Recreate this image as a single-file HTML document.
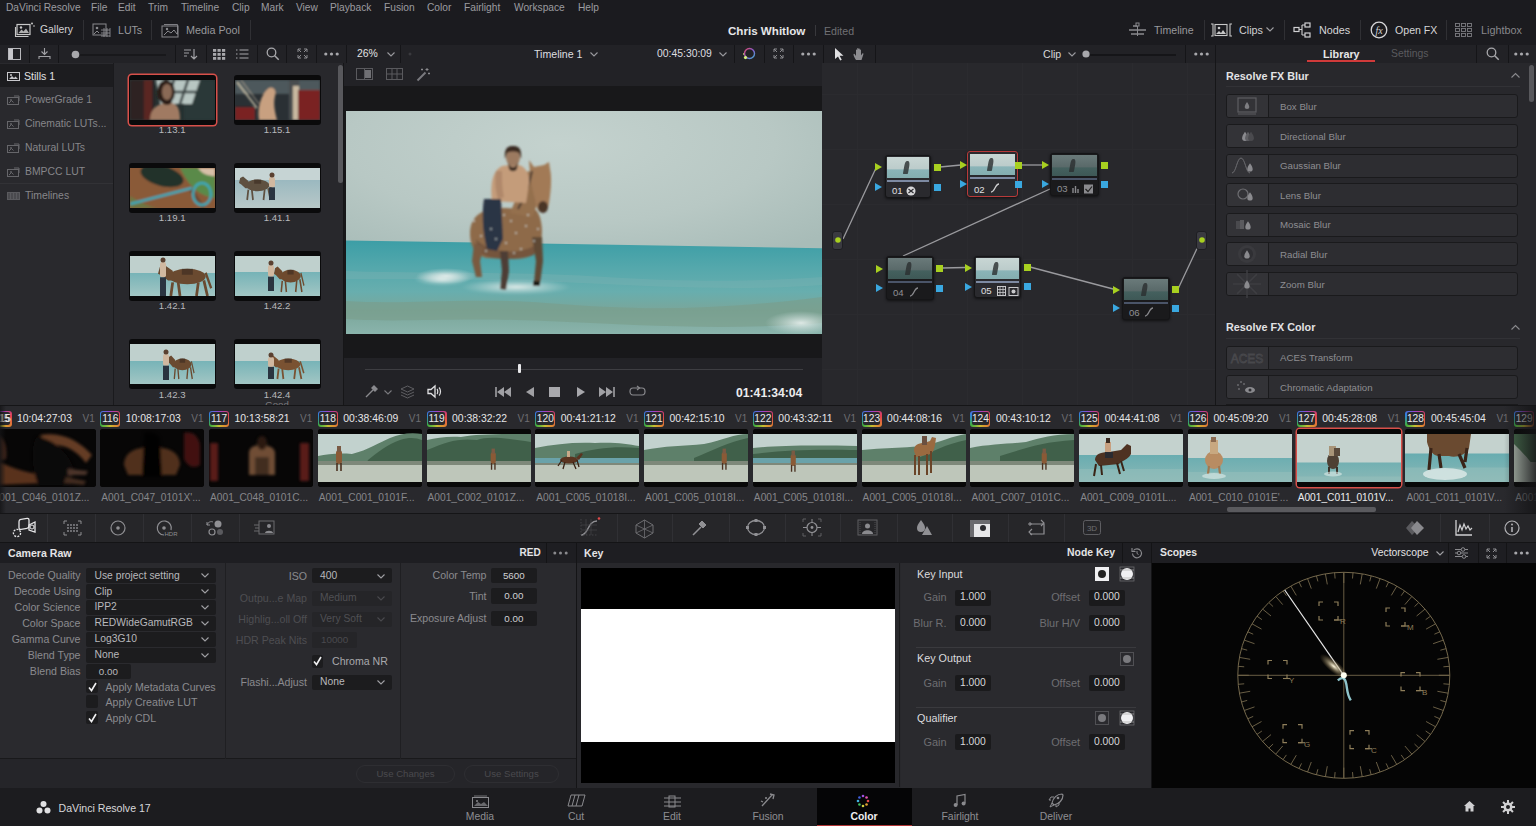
<!DOCTYPE html>
<html><head><meta charset="utf-8">
<style>
*{box-sizing:border-box;margin:0;padding:0}
html,body{width:1536px;height:826px;overflow:hidden;background:#1c1c20;font-family:"Liberation Sans",sans-serif;color:#c8c8c8;position:relative}
.a{position:absolute}
.t{position:absolute;white-space:nowrap;line-height:1}
svg{position:absolute;overflow:visible}
</style></head><body>
<div class="a" style="left:0px;top:0px;width:1536px;height:45px;background:#1b1b1f;"></div>
<div class="t" style="top:2.50px;font-size:10.2px;color:#9c9ca0;left:6px;">DaVinci Resolve</div>
<div class="t" style="top:2.50px;font-size:10.2px;color:#9c9ca0;left:91px;">File</div>
<div class="t" style="top:2.50px;font-size:10.2px;color:#9c9ca0;left:118px;">Edit</div>
<div class="t" style="top:2.50px;font-size:10.2px;color:#9c9ca0;left:148px;">Trim</div>
<div class="t" style="top:2.50px;font-size:10.2px;color:#9c9ca0;left:181px;">Timeline</div>
<div class="t" style="top:2.50px;font-size:10.2px;color:#9c9ca0;left:232px;">Clip</div>
<div class="t" style="top:2.50px;font-size:10.2px;color:#9c9ca0;left:261px;">Mark</div>
<div class="t" style="top:2.50px;font-size:10.2px;color:#9c9ca0;left:296px;">View</div>
<div class="t" style="top:2.50px;font-size:10.2px;color:#9c9ca0;left:330px;">Playback</div>
<div class="t" style="top:2.50px;font-size:10.2px;color:#9c9ca0;left:384px;">Fusion</div>
<div class="t" style="top:2.50px;font-size:10.2px;color:#9c9ca0;left:427px;">Color</div>
<div class="t" style="top:2.50px;font-size:10.2px;color:#9c9ca0;left:464px;">Fairlight</div>
<div class="t" style="top:2.50px;font-size:10.2px;color:#9c9ca0;left:514px;">Workspace</div>
<div class="t" style="top:2.50px;font-size:10.2px;color:#9c9ca0;left:578px;">Help</div>
<svg style="left:14px;top:21px" width="22" height="18" viewBox="0 0 22 18"><rect x="3" y="3.5" width="13" height="10" fill="none" stroke="#c8c8c8" stroke-width="1.2"/><path d="M1.5 6v9.5h13" fill="none" stroke="#c8c8c8" stroke-width="1.1"/><path d="M4.5 12l3-3.5 2 2 2.5-3 3 4.5z" fill="#b0b0b0"/><circle cx="7" cy="6.5" r="1.2" fill="#c8c8c8"/><circle cx="18" cy="2.5" r="1" fill="#c8c8c8"/><circle cx="20" cy="5" r="0.8" fill="#c8c8c8"/></svg>
<div class="t" style="top:24.90px;font-size:10.4px;color:#d2d2d4;left:40px;">Gallery</div>
<div class="a" style="left:83px;top:20px;width:1px;height:20px;background:#303034;"></div>
<svg style="left:92px;top:23px" width="20" height="15" viewBox="0 0 20 15"><rect x="1" y="1" width="13" height="11" fill="none" stroke="#8a8a8e" stroke-width="1"/><path d="M9 7h9M9 10h9M9 13h9M12 5v9M15 5v9M18 5v9" stroke="#8a8a8e" stroke-width="0.9"/><circle cx="5" cy="5" r="1.3" fill="#8a8a8e"/><path d="M2 11l3-3 2 2" stroke="#8a8a8e" fill="none"/></svg>
<div class="t" style="top:24.81px;font-size:10.6px;color:#98989c;left:118px;">LUTs</div>
<div class="a" style="left:151px;top:20px;width:1px;height:20px;background:#303034;"></div>
<svg style="left:161px;top:22px" width="19" height="16" viewBox="0 0 19 16"><rect x="1" y="4" width="16" height="11" fill="none" stroke="#8a8a8e" stroke-width="1"/><path d="M3 2.5h13.5v10" fill="none" stroke="#8a8a8e" stroke-width="0.9"/><path d="M3 13l4-4 3 2 3-3 3 4" stroke="#8a8a8e" fill="none"/><circle cx="6" cy="7" r="1.2" fill="#8a8a8e"/></svg>
<div class="t" style="top:24.71px;font-size:10.8px;color:#98989c;left:186px;">Media Pool</div>
<div class="a" style="left:250px;top:20px;width:1px;height:20px;background:#303034;"></div>
<div class="t" style="top:24.62px;font-size:11.6px;color:#e6e6e8;font-weight:700;left:728px;">Chris Whitlow</div>
<div class="a" style="left:815px;top:25px;width:1px;height:11px;background:#38383c;"></div>
<div class="t" style="top:25.61px;font-size:10.6px;color:#707074;left:824px;">Edited</div>
<svg style="left:1128px;top:22px" width="19" height="16" viewBox="0 0 19 16"><path d="M1 8h17M3 12h13M5 4h4" stroke="#8a8a8e" stroke-width="1.3"/><rect x="8" y="1" width="3" height="3" fill="none" stroke="#8a8a8e"/><path d="M9.5 4v10" stroke="#8a8a8e"/></svg>
<div class="t" style="top:24.81px;font-size:10.6px;color:#98989c;left:1154px;">Timeline</div>
<div class="a" style="left:1204px;top:20px;width:1px;height:20px;background:#303034;"></div>
<svg style="left:1210px;top:23px" width="23" height="14" viewBox="0 0 23 14"><path d="M1 1h2v12H1M22 1h-2v12h2" fill="none" stroke="#c8c8c8" stroke-width="1.1"/><rect x="5" y="1.5" width="12" height="11" fill="none" stroke="#c8c8c8" stroke-width="1.1"/><path d="M6 11l3-3 2 2 2-3 3 4z" fill="#c8c8c8"/><circle cx="9" cy="5" r="1.3" fill="#c8c8c8"/></svg>
<div class="t" style="top:24.71px;font-size:10.8px;color:#d0d0d2;left:1239px;">Clips</div>
<svg style="left:1266px;top:27px" width="8" height="5" viewBox="0 0 8 5"><path d="M0.5 0.5l3.5 3.5 3.5-3.5" fill="none" stroke="#a0a0a4" stroke-width="1.1"/></svg>
<div class="a" style="left:1284px;top:20px;width:1px;height:20px;background:#303034;"></div>
<svg style="left:1293px;top:22px" width="19" height="16" viewBox="0 0 19 16"><rect x="1" y="5.5" width="5" height="4" fill="none" stroke="#d0d0d2" stroke-width="1.2"/><rect x="12" y="1" width="5" height="4" fill="none" stroke="#d0d0d2" stroke-width="1.2"/><rect x="12" y="11" width="5" height="4" fill="none" stroke="#d0d0d2" stroke-width="1.2"/><path d="M6 7.5h3M9 3v10M9 3h3M9 13h3" stroke="#d0d0d2" stroke-width="1.1" fill="none"/></svg>
<div class="t" style="top:24.71px;font-size:10.8px;color:#d6d6d8;left:1319px;">Nodes</div>
<div class="a" style="left:1360px;top:20px;width:1px;height:20px;background:#303034;"></div>
<svg style="left:1370px;top:21px" width="18" height="18" viewBox="0 0 18 18"><circle cx="9" cy="9" r="7.8" fill="none" stroke="#d6d6d8" stroke-width="1.3"/><text x="9" y="12.5" font-family="Liberation Serif" font-style="italic" font-size="10" fill="#d6d6d8" text-anchor="middle">fx</text></svg>
<div class="t" style="top:24.81px;font-size:10.6px;color:#d6d6d8;left:1395px;">Open FX</div>
<div class="a" style="left:1446px;top:20px;width:1px;height:20px;background:#303034;"></div>
<svg style="left:1455px;top:23px" width="17" height="14" viewBox="0 0 17 14"><rect x="0.5" y="0.5" width="4" height="3" fill="none" stroke="#7c7c80" stroke-width="0.9"/><rect x="0.5" y="5.5" width="4" height="3" fill="none" stroke="#7c7c80" stroke-width="0.9"/><rect x="0.5" y="10.5" width="4" height="3" fill="none" stroke="#7c7c80" stroke-width="0.9"/><rect x="6.5" y="0.5" width="4" height="3" fill="none" stroke="#7c7c80" stroke-width="0.9"/><rect x="6.5" y="5.5" width="4" height="3" fill="none" stroke="#7c7c80" stroke-width="0.9"/><rect x="6.5" y="10.5" width="4" height="3" fill="none" stroke="#7c7c80" stroke-width="0.9"/><rect x="12.5" y="0.5" width="4" height="3" fill="none" stroke="#7c7c80" stroke-width="0.9"/><rect x="12.5" y="5.5" width="4" height="3" fill="none" stroke="#7c7c80" stroke-width="0.9"/><rect x="12.5" y="10.5" width="4" height="3" fill="none" stroke="#7c7c80" stroke-width="0.9"/></svg>
<div class="t" style="top:24.71px;font-size:10.8px;color:#88888c;left:1481px;">Lightbox</div>
<div class="a" style="left:0px;top:45px;width:1536px;height:18px;background:#222226;"></div>
<div class="a" style="left:29px;top:45px;width:1px;height:18px;background:#151518;"></div>
<div class="a" style="left:58px;top:45px;width:1px;height:18px;background:#151518;"></div>
<div class="a" style="left:175px;top:45px;width:1px;height:18px;background:#151518;"></div>
<div class="a" style="left:206px;top:45px;width:1px;height:18px;background:#151518;"></div>
<div class="a" style="left:257px;top:45px;width:1px;height:18px;background:#151518;"></div>
<div class="a" style="left:286px;top:45px;width:1px;height:18px;background:#151518;"></div>
<div class="a" style="left:316px;top:45px;width:1px;height:18px;background:#151518;"></div>
<div class="a" style="left:346px;top:45px;width:1px;height:18px;background:#151518;"></div>
<div class="a" style="left:400px;top:45px;width:1px;height:18px;background:#151518;"></div>
<div class="a" style="left:734px;top:45px;width:1px;height:18px;background:#151518;"></div>
<div class="a" style="left:764px;top:45px;width:1px;height:18px;background:#151518;"></div>
<div class="a" style="left:793px;top:45px;width:1px;height:18px;background:#151518;"></div>
<div class="a" style="left:823px;top:45px;width:1px;height:18px;background:#151518;"></div>
<div class="a" style="left:875px;top:45px;width:1px;height:18px;background:#151518;"></div>
<div class="a" style="left:1185px;top:45px;width:1px;height:18px;background:#151518;"></div>
<div class="a" style="left:1215px;top:45px;width:1px;height:18px;background:#151518;"></div>
<div class="a" style="left:1476px;top:45px;width:1px;height:18px;background:#151518;"></div>
<div class="a" style="left:1508px;top:45px;width:1px;height:18px;background:#151518;"></div>
<svg style="left:8px;top:48px" width="13" height="12" viewBox="0 0 13 12"><rect x="0.5" y="0.5" width="12" height="11" fill="none" stroke="#b8b8bc" stroke-width="1"/><rect x="1" y="1" width="4" height="10" fill="#c8c8cc"/></svg>
<svg style="left:38px;top:47px" width="13" height="13" viewBox="0 0 13 13"><path d="M6.5 1v6M3.5 4.5l3 3 3-3M1 12v-2.5h11V12" fill="none" stroke="#a0a0a4" stroke-width="1.1"/></svg>
<div class="a" style="left:78px;top:54px;width:88px;height:2px;background:#18181b;"></div>
<svg style="left:71px;top:50px" width="9" height="9"><circle cx="4.5" cy="4.5" r="3.8" fill="#a8a8ac"/></svg>
<svg style="left:183px;top:48px" width="15" height="13" viewBox="0 0 15 13"><path d="M1 2h7M1 5h5M1 8h3M11 1v10M8 8l3 3 3-3" fill="none" stroke="#a0a0a4" stroke-width="1.2"/></svg>
<svg style="left:213px;top:49px" width="13" height="10" viewBox="0 0 13 10"><rect x="0.0" y="0" width="3.2" height="2.8" fill="#a8a8ac"/><rect x="0.0" y="4" width="3.2" height="2.8" fill="#a8a8ac"/><rect x="0.0" y="8" width="3.2" height="2.8" fill="#a8a8ac"/><rect x="4.5" y="0" width="3.2" height="2.8" fill="#a8a8ac"/><rect x="4.5" y="4" width="3.2" height="2.8" fill="#a8a8ac"/><rect x="4.5" y="8" width="3.2" height="2.8" fill="#a8a8ac"/><rect x="9.0" y="0" width="3.2" height="2.8" fill="#a8a8ac"/><rect x="9.0" y="4" width="3.2" height="2.8" fill="#a8a8ac"/><rect x="9.0" y="8" width="3.2" height="2.8" fill="#a8a8ac"/></svg>
<svg style="left:236px;top:49px" width="13" height="10" viewBox="0 0 13 10"><path d="M0 1h1.5M0 5h1.5M0 9h1.5M3.5 1h9M3.5 5h9M3.5 9h9" stroke="#a8a8ac" stroke-width="1.2"/></svg>
<svg style="left:266px;top:47px" width="14" height="14" viewBox="0 0 14 14"><circle cx="5.5" cy="5.5" r="4.3" fill="none" stroke="#a8a8ac" stroke-width="1.3"/><path d="M8.7 8.7l4 4" stroke="#a8a8ac" stroke-width="1.5"/></svg>
<svg style="left:297px;top:48px" width="11" height="11" viewBox="0 0 11 11"><path d="M1 4V1h3M1 1l3 3M10 4V1H7M10 1L7 4M1 7v3h3M1 10l3-3M10 7v3H7M10 10L7 7" fill="none" stroke="#8c8c90" stroke-width="1"/></svg>
<svg style="left:324px;top:52px" width="15" height="4" viewBox="0 0 15 4"><circle cx="1.8" cy="2" r="1.6" fill="#a8a8ac"/><circle cx="7.5" cy="2" r="1.6" fill="#a8a8ac"/><circle cx="13.2" cy="2" r="1.6" fill="#a8a8ac"/></svg>
<div class="t" style="top:48.90px;font-size:10.4px;color:#e2e2e4;left:357px;">26%</div>
<svg style="left:387px;top:52px" width="8" height="5" viewBox="0 0 8 5"><path d="M0.5 0.5l3.5 3.5 3.5-3.5" fill="none" stroke="#9a9a9e" stroke-width="1.1"/></svg>
<svg style="left:408px;top:52px" width="4" height="4"><circle cx="2" cy="2" r="1.5" fill="#3a3a3e"/></svg>
<div class="t" style="top:48.81px;font-size:10.6px;color:#dedee0;left:534px;">Timeline 1</div>
<svg style="left:590px;top:52px" width="8" height="5" viewBox="0 0 8 5"><path d="M0.5 0.5l3.5 3.5 3.5-3.5" fill="none" stroke="#9a9a9e" stroke-width="1.1"/></svg>
<div class="t" style="top:48.90px;font-size:10.4px;color:#dedee0;left:657px;">00:45:30:09</div>
<svg style="left:719px;top:52px" width="8" height="5" viewBox="0 0 8 5"><path d="M0.5 0.5l3.5 3.5 3.5-3.5" fill="none" stroke="#9a9a9e" stroke-width="1.1"/></svg>
<svg style="left:741px;top:47px" width="15" height="15" viewBox="0 0 15 15"><circle cx="8.5" cy="6.5" r="5" fill="none" stroke="url(#cw)" stroke-width="1.4"/><defs><linearGradient id="cw" x1="0" y1="0" x2="1" y2="1"><stop offset="0" stop-color="#e04a6a"/><stop offset="0.5" stop-color="#8a5ad0"/><stop offset="1" stop-color="#40b0d0"/></linearGradient></defs><path d="M3.5 10.5l1 -2 1 2 -1 2z M2 7l0.6-1.2 0.6 1.2-0.6 1.2z" fill="#c8e070"/><circle cx="4.5" cy="10.5" r="1.6" fill="#d6f080"/></svg>
<svg style="left:773px;top:48px" width="11" height="11" viewBox="0 0 11 11"><path d="M1 4V1h3M1 1l3 3M10 4V1H7M10 1L7 4M1 7v3h3M1 10l3-3M10 7v3H7M10 10L7 7" fill="none" stroke="#8c8c90" stroke-width="1"/></svg>
<svg style="left:801px;top:52px" width="15" height="4" viewBox="0 0 15 4"><circle cx="1.8" cy="2" r="1.6" fill="#a8a8ac"/><circle cx="7.5" cy="2" r="1.6" fill="#a8a8ac"/><circle cx="13.2" cy="2" r="1.6" fill="#a8a8ac"/></svg>
<svg style="left:834px;top:47px" width="10" height="14" viewBox="0 0 10 14"><path d="M1 1v11l3-2.5 2.2 4 1.6-.8-2.2-4H9.5z" fill="#e0e0e2"/></svg>
<svg style="left:853px;top:47px" width="14" height="14" viewBox="0 0 14 14"><path d="M3 13c-1-1.5-2.5-4-2.5-5.5 0-.8 1-.9 1.5 0L3 9V3c0-.8 1.2-.8 1.2 0v4.5V1.5c0-.8 1.3-.8 1.3 0V7V2c0-.8 1.3-.8 1.3 0v5V3c0-.8 1.2-.8 1.2 0v5.5l1.2-1.8c.5-.7 1.5-.3 1.2.5L8.5 13z" fill="#8c8c90"/></svg>
<div class="t" style="top:48.81px;font-size:10.6px;color:#d8d8da;left:1043px;">Clip</div>
<svg style="left:1068px;top:52px" width="8" height="5" viewBox="0 0 8 5"><path d="M0.5 0.5l3.5 3.5 3.5-3.5" fill="none" stroke="#9a9a9e" stroke-width="1.1"/></svg>
<div class="a" style="left:1090px;top:54px;width:86px;height:1.5px;background:#151518;"></div>
<svg style="left:1082px;top:50px" width="8" height="8"><circle cx="4" cy="4" r="3.6" fill="#a8a8ac"/></svg>
<svg style="left:1194px;top:52px" width="15" height="4" viewBox="0 0 15 4"><circle cx="1.8" cy="2" r="1.6" fill="#a8a8ac"/><circle cx="7.5" cy="2" r="1.6" fill="#a8a8ac"/><circle cx="13.2" cy="2" r="1.6" fill="#a8a8ac"/></svg>
<div class="t" style="top:48.71px;font-size:10.8px;color:#e6e6e8;font-weight:700;left:1323px;">Library</div>
<div class="a" style="left:1307px;top:60px;width:68px;height:2px;background:#d03a3a;"></div>
<div class="t" style="top:48.90px;font-size:10.4px;color:#5a5a5e;left:1391px;">Settings</div>
<svg style="left:1486px;top:47px" width="14" height="14" viewBox="0 0 14 14"><circle cx="5.5" cy="5.5" r="4.3" fill="none" stroke="#a8a8ac" stroke-width="1.3"/><path d="M8.7 8.7l4 4" stroke="#a8a8ac" stroke-width="1.5"/></svg>
<svg style="left:1514px;top:52px" width="15" height="4" viewBox="0 0 15 4"><circle cx="1.8" cy="2" r="1.6" fill="#a8a8ac"/><circle cx="7.5" cy="2" r="1.6" fill="#a8a8ac"/><circle cx="13.2" cy="2" r="1.6" fill="#a8a8ac"/></svg>
<div class="a" style="left:0px;top:63px;width:113px;height:342px;background:#29292d;"></div>
<div class="a" style="left:0px;top:64px;width:113px;height:23px;background:#1c1c1f;"></div>
<div class="a" style="left:0px;top:183px;width:113px;height:1px;background:#323236;"></div>
<div class="a" style="left:113px;top:63px;width:1px;height:342px;background:#1a1a1d;"></div>
<div class="t" style="top:71.31px;font-size:10.6px;color:#e0e0e2;left:24px;">Stills 1</div>
<svg style="left:7px;top:72px" width="13" height="9" viewBox="0 0 13 9"><rect x="0.5" y="0.5" width="12" height="8" fill="none" stroke="#c8c8cc" stroke-width="1"/><path d="M2 7l3-3 2 2 1.5-1.5L11 7z" fill="#c8c8cc"/><circle cx="4" cy="3" r="1" fill="#c8c8cc"/></svg>
<div class="t" style="top:95.20px;font-size:10.4px;color:#86868a;left:25px;">PowerGrade 1</div>
<svg style="left:7px;top:95.3px" width="13" height="10" viewBox="0 0 13 10"><rect x="0.5" y="2.5" width="11" height="7" fill="none" stroke="#66666a" stroke-width="1"/><path d="M7 1h5v5" fill="none" stroke="#66666a"/><path d="M2 8l2.5-2.5 2 2" stroke="#66666a" fill="none"/><circle cx="4" cy="5" r="0.9" fill="#66666a"/></svg>
<div class="t" style="top:118.90px;font-size:10.4px;color:#86868a;left:25px;">Cinematic LUTs...</div>
<svg style="left:7px;top:119px" width="13" height="10" viewBox="0 0 13 10"><rect x="0.5" y="2.5" width="11" height="7" fill="none" stroke="#66666a" stroke-width="1"/><path d="M7 1h5v5" fill="none" stroke="#66666a"/><path d="M2 8l2.5-2.5 2 2" stroke="#66666a" fill="none"/><circle cx="4" cy="5" r="0.9" fill="#66666a"/></svg>
<div class="t" style="top:143.10px;font-size:10.4px;color:#86868a;left:25px;">Natural LUTs</div>
<svg style="left:7px;top:143.2px" width="13" height="10" viewBox="0 0 13 10"><rect x="0.5" y="2.5" width="11" height="7" fill="none" stroke="#66666a" stroke-width="1"/><path d="M7 1h5v5" fill="none" stroke="#66666a"/><path d="M2 8l2.5-2.5 2 2" stroke="#66666a" fill="none"/><circle cx="4" cy="5" r="0.9" fill="#66666a"/></svg>
<div class="t" style="top:166.90px;font-size:10.4px;color:#86868a;left:25px;">BMPCC LUT</div>
<svg style="left:7px;top:167px" width="13" height="10" viewBox="0 0 13 10"><rect x="0.5" y="2.5" width="11" height="7" fill="none" stroke="#66666a" stroke-width="1"/><path d="M7 1h5v5" fill="none" stroke="#66666a"/><path d="M2 8l2.5-2.5 2 2" stroke="#66666a" fill="none"/><circle cx="4" cy="5" r="0.9" fill="#66666a"/></svg>
<div class="t" style="top:190.90px;font-size:10.4px;color:#86868a;left:25px;">Timelines</div>
<svg style="left:7px;top:192px" width="13" height="8" viewBox="0 0 13 8"><rect x="0" y="0" width="13" height="8" fill="#5a5a5e"/><path d="M2 1v6M5 1v6M8 1v6M11 1v6" stroke="#3a3a3e" stroke-width="1"/></svg>
<div class="a" style="left:114px;top:63px;width:230px;height:342px;background:#28282c;"></div>
<div class="a" style="left:338px;top:65px;width:5px;height:118px;background:#58585c;border-radius:3px"></div>
<div class="a" style="left:128.5px;top:74.5px;width:87px;height:50px;background:#0a0a0b;border-radius:3px;box-shadow:0 0 0 1.5px #d8504a;overflow:hidden"><div class="a" style="left:1px;top:5px;width:85px;height:40px;background:#000;overflow:hidden"><svg width="85" height="40" style="left:0;top:0;overflow:hidden"><defs><filter id="sf1" x="-20%" y="-20%" width="140%" height="140%"><feGaussianBlur stdDeviation="0.8"/></filter></defs><rect width="85" height="40" fill="#263030"/><g filter="url(#sf1)"><rect x="0" y="0" width="24" height="40" fill="#2e2220"/><rect x="14" y="0" width="8" height="40" fill="#5a2622"/><rect x="54" y="0" width="31" height="40" fill="#2a3838"/><path d="M26 0H70L62 24H30z" fill="#b8c6c2"/><path d="M44 0L36 24M58 0L50 24M30 12H66" stroke="#3a4444" stroke-width="2.5"/><path d="M20 40C20 30 26 24 36 23S50 26 50 40z" fill="#a07a62"/><ellipse cx="36" cy="12" rx="9" ry="12" fill="#2a1e18"/><ellipse cx="37" cy="12" rx="5" ry="8" fill="#8a6a56"/><path d="M32 16C34 24 40 24 42 16L42 22C40 26 34 26 32 22z" fill="#2a1e18"/></g></svg></div></div>
<div class="a" style="left:233.5px;top:75px;width:87px;height:50px;background:#0a0a0b;border-radius:3px;overflow:hidden"><div class="a" style="left:1px;top:5px;width:85px;height:40px;background:#000;overflow:hidden"><svg width="85" height="40" style="left:0;top:0;overflow:hidden"><defs><filter id="sf2" x="-20%" y="-20%" width="140%" height="140%"><feGaussianBlur stdDeviation="0.8"/></filter></defs><rect width="85" height="40" fill="#2a3034"/><g filter="url(#sf2)"><rect x="0" y="0" width="85" height="14" fill="#4e585c"/><rect x="54" y="0" width="10" height="40" fill="#4a4e50"/><rect x="58" y="6" width="6" height="34" fill="#c8b8a0"/><rect x="63" y="10" width="22" height="30" fill="#7a2222"/><rect x="0" y="27" width="20" height="13" fill="#7a2424"/><path d="M2 2L22 28" stroke="#c8c0a8" stroke-width="1.5"/><path d="M6 0L24 24" stroke="#a8a090" stroke-width="1"/><path d="M24 40C22 28 26 14 34 8C38 6 42 10 40 16C38 24 40 32 42 40z" fill="#c8a080"/></g></svg></div></div>
<div class="a" style="left:128.5px;top:163px;width:87px;height:50px;background:#0a0a0b;border-radius:3px;overflow:hidden"><div class="a" style="left:1px;top:5px;width:85px;height:40px;background:#000;overflow:hidden"><svg width="85" height="40" style="left:0;top:0;overflow:hidden"><defs><filter id="sf3" x="-20%" y="-20%" width="140%" height="140%"><feGaussianBlur stdDeviation="0.8"/></filter></defs><rect width="85" height="40" fill="#8a5a38"/><g filter="url(#sf3)"><rect x="0" y="0" width="85" height="40" fill="#8a5a38"/><path d="M50 0H85V30C70 28 60 20 50 0z" fill="#5a8a4a"/><path d="M0 28C10 34 20 40 30 40H0z" fill="#5a8a4a" opacity=".6"/><ellipse cx="32" cy="8" rx="22" ry="10" fill="#24302a" transform="rotate(15 32 8)"/><path d="M60 20C66 30 70 36 74 40" stroke="#6a4a30" stroke-width="4"/><path d="M0 36L62 20" stroke="#3aa8b8" stroke-width="2.5"/><ellipse cx="72" cy="26" rx="9" ry="11" fill="none" stroke="#3aa8b8" stroke-width="2.5"/><path d="M68 0H85V8C78 8 72 6 68 0z" fill="#d8c0a8"/></g></svg></div></div>
<div class="a" style="left:233.5px;top:163px;width:87px;height:50px;background:#0a0a0b;border-radius:3px;overflow:hidden"><div class="a" style="left:1px;top:5px;width:85px;height:40px;background:#000;overflow:hidden"><svg width="85" height="40" viewBox="-2 0 85 40" preserveAspectRatio="none" style="left:0;top:0;overflow:hidden"><defs><linearGradient id="bs12581" x1="0" y1="0" x2="0" y2="1"><stop offset="0" stop-color="#8eb2bc"/><stop offset="1" stop-color="#b8c8c8"/></linearGradient></defs><rect x="-2" width="85" height="40" fill="url(#bs12581)"/><rect x="-2" width="85" height="12" fill="#c6d4d4"/><g transform="translate(2 7) scale(0.5833333333333334 0.7352941176470589)"><ellipse cx="32" cy="14" rx="20" ry="8" fill="#5e5040"/><path d="M16 8L7 2 2 4 0 11 4 13 11 18 18 18z" fill="#5e5040"/><path d="M16 20l-2 14M22 20l2 14M44 20l-2 14M50 18l4 16" stroke="#5e5040" stroke-width="3"/><path d="M52 10l6 16" stroke="#5e5040" stroke-width="2.5"/><path d="M26 6h12v6H26z" fill="#3a2a20" opacity=".6"/></g><rect x="32" y="9" width="6" height="10.35" rx="2" fill="#d0b8a0"/><rect x="32" y="19.35" width="6" height="12.65" fill="#2a3440"/><circle cx="35" cy="7" r="2.5" fill="#5a4030"/></svg></div></div>
<div class="a" style="left:128.5px;top:251px;width:87px;height:50px;background:#0a0a0b;border-radius:3px;overflow:hidden"><div class="a" style="left:1px;top:5px;width:85px;height:40px;background:#000;overflow:hidden"><svg width="85" height="40" viewBox="-2 0 85 40" preserveAspectRatio="none" style="left:0;top:0;overflow:hidden"><defs><linearGradient id="bs17593" x1="0" y1="0" x2="0" y2="1"><stop offset="0" stop-color="#58a6ae"/><stop offset="1" stop-color="#a2c6c4"/></linearGradient></defs><rect x="-2" width="85" height="40" fill="url(#bs17593)"/><rect x="-2" width="85" height="17" fill="#bfd0cd"/><g transform="translate(26 7) scale(0.9166666666666666 0.9705882352941176)"><ellipse cx="32" cy="14" rx="20" ry="8" fill="#6a4a30"/><path d="M16 8L7 2 2 4 0 11 4 13 11 18 18 18z" fill="#6a4a30"/><path d="M16 20l-2 14M22 20l2 14M44 20l-2 14M50 18l4 16" stroke="#6a4a30" stroke-width="3"/><path d="M52 10l6 16" stroke="#6a4a30" stroke-width="2.5"/><path d="M26 6h12v6H26z" fill="#3a2a20" opacity=".6"/></g><rect x="28" y="6" width="6" height="15.3" rx="2" fill="#d0b8a0"/><rect x="28" y="21.3" width="6" height="18.700000000000003" fill="#2a3440"/><circle cx="31" cy="4" r="2.5" fill="#5a4030"/></svg></div></div>
<div class="a" style="left:233.5px;top:251px;width:87px;height:50px;background:#0a0a0b;border-radius:3px;overflow:hidden"><div class="a" style="left:1px;top:5px;width:85px;height:40px;background:#000;overflow:hidden"><svg width="85" height="40" viewBox="-2 0 85 40" preserveAspectRatio="none" style="left:0;top:0;overflow:hidden"><defs><linearGradient id="bs16607" x1="0" y1="0" x2="0" y2="1"><stop offset="0" stop-color="#58a6ae"/><stop offset="1" stop-color="#a2c6c4"/></linearGradient></defs><rect x="-2" width="85" height="40" fill="url(#bs16607)"/><rect x="-2" width="85" height="16" fill="#bfd0cd"/><g transform="translate(37 9) scale(0.5166666666666667 0.7941176470588235)"><ellipse cx="32" cy="14" rx="20" ry="8" fill="#6e4a2e"/><path d="M16 8L7 2 2 4 0 11 4 13 11 18 18 18z" fill="#6e4a2e"/><path d="M16 20l-2 14M22 20l2 14M44 20l-2 14M50 18l4 16" stroke="#6e4a2e" stroke-width="3"/><path d="M52 10l6 16" stroke="#6e4a2e" stroke-width="2.5"/><path d="M26 6h12v6H26z" fill="#3a2a20" opacity=".6"/></g><rect x="31" y="9" width="6" height="11.700000000000001" rx="2" fill="#d0b8a0"/><rect x="31" y="20.700000000000003" width="6" height="14.3" fill="#2a3440"/><circle cx="34" cy="7" r="2.5" fill="#5a4030"/></svg></div></div>
<div class="a" style="left:128.5px;top:339px;width:87px;height:50px;background:#0a0a0b;border-radius:3px;overflow:hidden"><div class="a" style="left:1px;top:5px;width:85px;height:40px;background:#000;overflow:hidden"><svg width="85" height="40" viewBox="-2 0 85 40" preserveAspectRatio="none" style="left:0;top:0;overflow:hidden"><defs><linearGradient id="bs17595" x1="0" y1="0" x2="0" y2="1"><stop offset="0" stop-color="#58a6ae"/><stop offset="1" stop-color="#a2c6c4"/></linearGradient></defs><rect x="-2" width="85" height="40" fill="url(#bs17595)"/><rect x="-2" width="85" height="17" fill="#bfd0cd"/><g transform="translate(36 10) scale(0.45 0.7352941176470589)"><ellipse cx="32" cy="14" rx="20" ry="8" fill="#6a4a30"/><path d="M16 8L7 2 2 4 0 11 4 13 11 18 18 18z" fill="#6a4a30"/><path d="M16 20l-2 14M22 20l2 14M44 20l-2 14M50 18l4 16" stroke="#6a4a30" stroke-width="3"/><path d="M52 10l6 16" stroke="#6a4a30" stroke-width="2.5"/><path d="M26 6h12v6H26z" fill="#3a2a20" opacity=".6"/></g><rect x="31" y="10" width="6" height="11.700000000000001" rx="2" fill="#d0b8a0"/><rect x="31" y="21.700000000000003" width="6" height="14.3" fill="#2a3440"/><circle cx="34" cy="8" r="2.5" fill="#5a4030"/></svg></div></div>
<div class="a" style="left:233.5px;top:339px;width:87px;height:50px;background:#0a0a0b;border-radius:3px;overflow:hidden"><div class="a" style="left:1px;top:5px;width:85px;height:40px;background:#000;overflow:hidden"><svg width="85" height="40" viewBox="-2 0 85 40" preserveAspectRatio="none" style="left:0;top:0;overflow:hidden"><defs><linearGradient id="bs17580" x1="0" y1="0" x2="0" y2="1"><stop offset="0" stop-color="#58a6ae"/><stop offset="1" stop-color="#a2c6c4"/></linearGradient></defs><rect x="-2" width="85" height="40" fill="url(#bs17580)"/><rect x="-2" width="85" height="17" fill="#bfd0cd"/><g transform="translate(32 10) scale(0.6 0.7352941176470589)"><ellipse cx="32" cy="14" rx="20" ry="8" fill="#7a5232"/><path d="M16 8L7 2 2 4 0 11 4 13 11 18 18 18z" fill="#7a5232"/><path d="M16 20l-2 14M22 20l2 14M44 20l-2 14M50 18l4 16" stroke="#7a5232" stroke-width="3"/><path d="M52 10l6 16" stroke="#7a5232" stroke-width="2.5"/><path d="M26 6h12v6H26z" fill="#3a2a20" opacity=".6"/></g><rect x="31" y="13" width="6" height="9.9" rx="2" fill="#d0b8a0"/><rect x="31" y="22.9" width="6" height="12.100000000000001" fill="#2a3440"/><circle cx="34" cy="11" r="2.5" fill="#5a4030"/></svg></div></div>
<div class="t" style="top:125.30px;font-size:9.6px;color:#b8b8bc;left:172.2px;transform:translateX(-50%);">1.13.1</div>
<div class="t" style="top:125.30px;font-size:9.6px;color:#b8b8bc;left:277px;transform:translateX(-50%);">1.15.1</div>
<div class="t" style="top:213.30px;font-size:9.6px;color:#b8b8bc;left:172.2px;transform:translateX(-50%);">1.19.1</div>
<div class="t" style="top:213.30px;font-size:9.6px;color:#b8b8bc;left:277px;transform:translateX(-50%);">1.41.1</div>
<div class="t" style="top:301.30px;font-size:9.6px;color:#b8b8bc;left:172.2px;transform:translateX(-50%);">1.42.1</div>
<div class="t" style="top:301.30px;font-size:9.6px;color:#b8b8bc;left:277px;transform:translateX(-50%);">1.42.2</div>
<div class="t" style="top:389.80px;font-size:9.6px;color:#b8b8bc;left:172.2px;transform:translateX(-50%);">1.42.3</div>
<div class="t" style="top:389.80px;font-size:9.6px;color:#b8b8bc;left:277px;transform:translateX(-50%);">1.42.4</div>
<div class="t" style="top:400.30px;font-size:9.6px;color:#7a7a7e;left:277px;transform:translateX(-50%);">Good</div>
<div class="a" style="left:344px;top:63px;width:478px;height:23px;background:#222226;"></div>
<div class="a" style="left:344px;top:86px;width:478px;height:25px;background:#18181a;"></div>
<div class="a" style="left:344px;top:334px;width:478px;height:24px;background:#18181a;"></div>
<div class="a" style="left:344px;top:358px;width:478px;height:48px;background:#222226;"></div>
<div class="a" style="left:343px;top:63px;width:1px;height:343px;background:#161618;"></div>
<div class="a" style="left:344px;top:111px;width:2px;height:223px;background:#18181a;"></div>
<svg style="left:356px;top:68px" width="17" height="12" viewBox="0 0 17 12"><rect x="0.5" y="0.5" width="16" height="11" fill="none" stroke="#5a5a5e"/><rect x="9" y="2" width="6" height="8" fill="#707074"/><path d="M8.5 1v10" stroke="#5a5a5e"/></svg>
<svg style="left:386px;top:68px" width="17" height="12" viewBox="0 0 17 12"><rect x="0.5" y="0.5" width="16" height="11" fill="none" stroke="#5a5a5e"/><path d="M1 6h15M6 1v10M11 1v10" stroke="#5a5a5e"/></svg>
<svg style="left:416px;top:67px" width="15" height="15" viewBox="0 0 15 15"><path d="M1.5 13.5l8-8" stroke="#7a7a7e" stroke-width="2"/><path d="M11 1v3M9.5 2.5h3M13 5.5v2M12 6.5h2M6 1.5v2M5 2.5h2" stroke="#8a8a8e" stroke-width="1"/></svg>
<svg style="left:346px;top:111px;overflow:hidden" width="476" height="223" viewBox="0 0 476 223">
<defs>
<radialGradient id="sky" cx="0.45" cy="0.15" r="0.75" gradientTransform="translate(0.45 0.15) scale(1 0.8) translate(-0.45 -0.15)"><stop offset="0" stop-color="#c4d2ce"/><stop offset="0.6" stop-color="#b8c8c4"/><stop offset="1" stop-color="#a8bcb8"/></radialGradient>
<linearGradient id="sea" x1="0" y1="0" x2="0" y2="1"><stop offset="0" stop-color="#3c9ea6"/><stop offset="0.3" stop-color="#55a8ac"/><stop offset="0.55" stop-color="#68aeae"/><stop offset="0.75" stop-color="#7aa69a"/><stop offset="1" stop-color="#8ab4ac"/></linearGradient>
<filter id="soft" x="-10%" y="-10%" width="120%" height="120%"><feGaussianBlur stdDeviation="0.9"/></filter><radialGradient id="foam" cx="0.5" cy="0.5" r="0.5"><stop offset="0" stop-color="#e8f0ee" stop-opacity="0.9"/><stop offset="1" stop-color="#cfe0de" stop-opacity="0"/></radialGradient>
</defs>
<rect width="476" height="223" fill="url(#sky)"/>
<path d="M0 129.4L476 137.3V223H0z" fill="url(#sea)"/>
<path d="M0 190c60 4 120 -4 200 2s150 10 276 -6V212c-100 8 -180 2 -276 -2S60 212 0 208z" fill="#7a9c8a" opacity="0.6"/>
<path d="M0 160c80 3 160 0 260 6s160 4 216 0v8c-80 6-160 2-240 -2S60 168 0 168z" fill="#7ab2b2" opacity="0.4"/>
<ellipse cx="455" cy="212" rx="36" ry="12" fill="url(#foam)"/><ellipse cx="100" cy="165" rx="30" ry="8" fill="url(#foam)"/>
<!-- horse --><g filter="url(#soft)">
<ellipse cx="96" cy="168" rx="28" ry="7" fill="url(#foam)"/>
<ellipse cx="170" cy="176" rx="55" ry="8" fill="url(#foam)"/>
<path d="M124 122C124 104 138 96 160 97L190 99C196 106 197 120 195 132C193 142 184 148 168 148L140 147C128 143 124 134 124 122z" fill="#8e6a4a"/>
<path d="M130 128C140 140 170 146 190 134L188 144C170 150 142 150 132 140z" fill="#6a4c36" opacity="0.7"/>
<path d="M128 132L126 150 130 166 136 166 134 150 138 136z" fill="#7a5a40"/>
<path d="M154 140L156 160 154 178 160 179 163 160 162 140z" fill="#4e3e34"/>
<path d="M186 126L190 150 188 172 194 173 197 150 196 126z" fill="#5e4836"/>
<rect x="187" y="170" width="7" height="5" fill="#1e1a18"/>
<path d="M164 102C170 88 176 72 182 60L188 62C192 72 193 82 191 94L186 106z" fill="#94704e"/><path d="M183 49L188 56 198 54 203 51 204 58C206 66 205 80 203 92C202 98 199 102 195 101C191 100 190 94 189 88C186 78 184 66 183 49z" fill="#a27a56"/><ellipse cx="197" cy="96" rx="5" ry="6" fill="#4a3428"/><path d="M186 60C184 70 180 84 172 98" stroke="#4a3a30" stroke-width="2" fill="none"/>
<path d="M146 90C144 74 146 60 156 55L170 53C180 55 184 63 183 73L180 92z" fill="#c49c7a"/>
<path d="M150 60C148 70 150 82 152 88L158 86C156 78 156 68 156 60z" fill="#a88064" opacity="0.7"/>
<ellipse cx="167" cy="46" rx="7" ry="9.5" fill="#9c7a60"/>
<path d="M159 48C158 38 161 35 167 35S176 38 175 48L173 42C170 40 164 40 161 42z" fill="#3a2a20"/>
<path d="M162 51C164 58 170 58 172 51L171 58C169 61 165 61 163 58z" fill="#3a2a22"/>
<path d="M138 88L155 88 157 128 151 140 141 138C136 120 136 100 138 88z" fill="#2c3444"/>
<circle cx="145" cy="118" r="0.9" fill="#d8e4e2" opacity=".8"/><circle cx="170" cy="122" r="0.9" fill="#d8e4e2" opacity=".8"/><circle cx="160" cy="132" r="0.9" fill="#d8e4e2" opacity=".8"/><circle cx="180" cy="115" r="0.9" fill="#d8e4e2" opacity=".8"/><circle cx="165" cy="110" r="0.9" fill="#d8e4e2" opacity=".8"/><circle cx="188" cy="130" r="0.9" fill="#d8e4e2" opacity=".8"/><circle cx="150" cy="128" r="0.9" fill="#d8e4e2" opacity=".8"/><circle cx="175" cy="138" r="0.9" fill="#d8e4e2" opacity=".8"/><circle cx="135" cy="125" r="0.9" fill="#d8e4e2" opacity=".8"/><circle cx="158" cy="104" r="0.9" fill="#d8e4e2" opacity=".8"/><circle cx="182" cy="104" r="0.9" fill="#d8e4e2" opacity=".8"/><circle cx="168" cy="142" r="0.9" fill="#d8e4e2" opacity=".8"/><circle cx="192" cy="118" r="0.9" fill="#d8e4e2" opacity=".8"/><circle cx="140" cy="140" r="0.9" fill="#d8e4e2" opacity=".8"/><circle cx="128" cy="110" r="0.9" fill="#d8e4e2" opacity=".8"/></g>
</svg>
<div class="a" style="left:365px;top:368.5px;width:438px;height:1.5px;background:#3e3e42;"></div>
<div class="a" style="left:518px;top:364px;width:3px;height:9px;background:#e8e8ea;border-radius:1px"></div>
<svg style="left:365px;top:385px" width="13" height="13" viewBox="0 0 13 13"><path d="M1 12l7-7M7 3l3 3M9 1l3 3-2 2-3-3z" stroke="#8a8a8e" stroke-width="1.4" fill="#8a8a8e"/></svg>
<svg style="left:384px;top:390px" width="8" height="5" viewBox="0 0 8 5"><path d="M0.5 0.5l3.5 3.5 3.5-3.5" fill="none" stroke="#7a7a7e" stroke-width="1.1"/></svg>
<svg style="left:400px;top:385px" width="15" height="13" viewBox="0 0 15 13"><path d="M7.5 1L14 4 7.5 7 1 4z M1 7l6.5 3 6.5-3M1 10l6.5 3 6.5-3" fill="none" stroke="#5e5e62" stroke-width="1"/></svg>
<svg style="left:427px;top:385px" width="15" height="13" viewBox="0 0 15 13"><path d="M1 4.5h3l4-3.5v11l-4-3.5H1z" fill="none" stroke="#e0e0e2" stroke-width="1.3"/><path d="M10 4c1 1 1 4 0 5M12 2.5c2 2 2 6 0 8" fill="none" stroke="#e0e0e2" stroke-width="1.2"/></svg>
<svg style="left:495px;top:386px" width="17" height="12" viewBox="0 0 17 12"><path d="M1 1v10" stroke="#a0a0a4" stroke-width="1.6"/><path d="M2 6l7-5v10zM9 6l7-5v10z" fill="#a0a0a4"/></svg>
<svg style="left:526px;top:387px" width="9" height="10" viewBox="0 0 9 10"><path d="M0 5l8-5v10z" fill="#a0a0a4"/></svg>
<div class="a" style="left:549px;top:387px;width:11px;height:10px;background:#a8a8ac;"></div>
<svg style="left:576px;top:387px" width="9" height="10" viewBox="0 0 9 10"><path d="M9 5L1 0v10z" fill="#a8a8ac"/></svg>
<svg style="left:598px;top:386px" width="17" height="12" viewBox="0 0 17 12"><path d="M16 1v10" stroke="#a0a0a4" stroke-width="1.6"/><path d="M15 6L8 1v10zM8 6L1 1v10z" fill="#a0a0a4"/></svg>
<svg style="left:629px;top:385px" width="17" height="13" viewBox="0 0 17 13"><path d="M4 3h9c2 0 3 1.5 3 3.5S15 10 13 10H4c-2 0-3-1.5-3-3.5S2 3 4 3" fill="none" stroke="#8a8a8e" stroke-width="1.2"/><path d="M8 1l2.5 2L8 5" fill="none" stroke="#8a8a8e" stroke-width="1.2"/></svg>
<div class="t" style="top:387.02px;font-size:12.2px;color:#ececee;font-weight:700;left:736px;">01:41:34:04</div>
<div class="a" style="left:822px;top:63px;width:393px;height:343px;background:#28282c;"></div>
<svg style="left:822px;top:63px;overflow:hidden" width="393" height="343"><path d="M35.5 0V343" stroke="#2b2b2f" stroke-width="1"/><path d="M90.5 0V343" stroke="#2b2b2f" stroke-width="1"/><path d="M145.5 0V343" stroke="#2b2b2f" stroke-width="1"/><path d="M200.5 0V343" stroke="#2b2b2f" stroke-width="1"/><path d="M255.5 0V343" stroke="#2b2b2f" stroke-width="1"/><path d="M310.5 0V343" stroke="#2b2b2f" stroke-width="1"/><path d="M365.5 0V343" stroke="#2b2b2f" stroke-width="1"/><path d="M420.5 0V343" stroke="#2b2b2f" stroke-width="1"/><path d="M0 31.5H393" stroke="#2b2b2f" stroke-width="1"/><path d="M0 86.5H393" stroke="#2b2b2f" stroke-width="1"/><path d="M0 141.5H393" stroke="#2b2b2f" stroke-width="1"/><path d="M0 196.5H393" stroke="#2b2b2f" stroke-width="1"/><path d="M0 251.5H393" stroke="#2b2b2f" stroke-width="1"/><path d="M0 306.5H393" stroke="#2b2b2f" stroke-width="1"/><path d="M0 361.5H393" stroke="#2b2b2f" stroke-width="1"/></svg>
<div class="a" style="left:1215px;top:63px;width:1px;height:343px;background:#161618;"></div>
<svg style="left:0;top:0" width="1536" height="826"><path d="M843 239L876 168" stroke="#9a9a9e" stroke-width="1.3"/><path d="M940 167L961 165" stroke="#9a9a9e" stroke-width="1.3"/><path d="M1021 165L1043 165" stroke="#9a9a9e" stroke-width="1.3"/><path d="M1050 189L903 256" stroke="#9a9a9e" stroke-width="1.3"/><path d="M942 268L965 267.5" stroke="#9a9a9e" stroke-width="1.3"/><path d="M1030 267L1115 289.5" stroke="#9a9a9e" stroke-width="1.3"/><path d="M1178 289L1201 240" stroke="#9a9a9e" stroke-width="1.3"/></svg>
<div class="a" style="left:832px;top:231px;width:11px;height:19px;background:#3a3a40;border-radius:3px;border:1px solid #1e1e22"></div>
<svg style="left:834.5px;top:237px" width="6" height="6"><circle cx="3" cy="3" r="2.8" fill="#a8d020"/></svg>
<div class="a" style="left:1196px;top:231px;width:11px;height:19px;background:#3a3a40;border-radius:3px;border:1px solid #1e1e22"></div>
<svg style="left:1198.5px;top:237px" width="6" height="6"><circle cx="3" cy="3" r="2.8" fill="#a8d020"/></svg>
<div class="a" style="left:885px;top:155px;width:46px;height:43px;background:#2a2a2e;border:1px solid #151517;border-radius:3px;box-shadow:0 1px 3px rgba(0,0,0,.6)"></div>
<div class="a" style="left:887px;top:157px;width:42px;height:21px;background:linear-gradient(#c8d6d4 0%,#bccccb 55%,#8ab4b8 62%,#84aeb0 100%);overflow:hidden"><div class="a" style="left:16.8px;top:4px;width:5px;height:13px;background:#2a2e30;border-radius:40% 40% 10% 10%;opacity:.8;transform:skewX(-10deg)"></div></div>
<div class="a" style="left:887px;top:180px;width:42px;height:2px;background:#7d8aa2;"></div>
<div class="t" style="top:185.80px;font-size:9.6px;color:#e0e0e2;left:892px;">01</div>
<svg style="left:906px;top:186px" width="10" height="10"><circle cx="5" cy="5" r="4.5" fill="#d8d8da"/><path d="M2.5 3l5 4M2.5 7l5-4" stroke="#2a2a2e" stroke-width="1.2"/></svg>
<svg style="left:875px;top:163px" width="7" height="8"><path d="M0 0L7 4 0 8z" fill="#a8d020"/></svg>
<svg style="left:875px;top:183px" width="7" height="8"><path d="M0 0L7 4 0 8z" fill="#3aa8e0"/></svg>
<div class="a" style="left:934px;top:163.5px;width:7px;height:7px;background:#a8d020;"></div>
<div class="a" style="left:934px;top:183.5px;width:7px;height:7px;background:#3aa8e0;"></div>
<div class="a" style="left:967px;top:151px;width:51px;height:46px;background:#2a2a2e;border:1.2px solid #b83a3a;border-radius:3px;box-shadow:0 1px 3px rgba(0,0,0,.6)"></div>
<div class="a" style="left:970px;top:154px;width:45px;height:21px;background:linear-gradient(#c8d6d4 0%,#bccccb 55%,#8ab4b8 62%,#84aeb0 100%);overflow:hidden"><div class="a" style="left:18.0px;top:4px;width:5px;height:13px;background:#2a2e30;border-radius:40% 40% 10% 10%;opacity:.8;transform:skewX(-10deg)"></div></div>
<div class="a" style="left:970px;top:177px;width:45px;height:2px;background:#7d8aa2;"></div>
<div class="t" style="top:184.80px;font-size:9.6px;color:#e0e0e2;left:974px;">02</div>
<svg style="left:990px;top:183px" width="10" height="10" viewBox="0 0 10 10"><path d="M1 9C5 9 5 1 9 1" fill="none" stroke="#d0d0d2" stroke-width="1.3"/></svg>
<svg style="left:960px;top:161px" width="7" height="8"><path d="M0 0L7 4 0 8z" fill="#a8d020"/></svg>
<svg style="left:960px;top:180px" width="7" height="8"><path d="M0 0L7 4 0 8z" fill="#3aa8e0"/></svg>
<div class="a" style="left:1015px;top:161.5px;width:7px;height:7px;background:#a8d020;"></div>
<div class="a" style="left:1015px;top:180.5px;width:7px;height:7px;background:#3aa8e0;"></div>
<div class="a" style="left:1050px;top:153px;width:49px;height:43px;background:#1a1a1c;border:1px solid #151517;border-radius:3px;box-shadow:0 1px 3px rgba(0,0,0,.6)"></div>
<div class="a" style="left:1052px;top:155px;width:45px;height:21px;background:linear-gradient(#6a7a7a 0%,#5a6a6a 55%,#44605e 62%,#3e5856 100%);overflow:hidden"><div class="a" style="left:18.0px;top:4px;width:5px;height:13px;background:#2a2e30;border-radius:40% 40% 10% 10%;opacity:.8;transform:skewX(-10deg)"></div></div>
<div class="a" style="left:1052px;top:178px;width:45px;height:2px;background:#4a5468;"></div>
<div class="t" style="top:183.80px;font-size:9.6px;color:#909094;left:1057px;">03</div>
<svg style="left:1072px;top:184px" width="22" height="10"><path d="M1 9V4M3.5 9V2M6 9V5" stroke="#8a8a8e" stroke-width="1.4"/><rect x="12" y="0.5" width="9" height="9" fill="#8a8a8e"/><path d="M13.5 5l2.5 2.5 4-5" stroke="#222" stroke-width="1.2" fill="none"/></svg>
<svg style="left:1042px;top:161px" width="7" height="8"><path d="M0 0L7 4 0 8z" fill="#a8d020"/></svg>
<svg style="left:1042px;top:180px" width="7" height="8"><path d="M0 0L7 4 0 8z" fill="#3aa8e0"/></svg>
<div class="a" style="left:1101px;top:161.5px;width:7px;height:7px;background:#a8d020;"></div>
<div class="a" style="left:1101px;top:180.5px;width:7px;height:7px;background:#3aa8e0;"></div>
<div class="a" style="left:886px;top:256px;width:48px;height:44px;background:#1a1a1c;border:1px solid #151517;border-radius:3px;box-shadow:0 1px 3px rgba(0,0,0,.6)"></div>
<div class="a" style="left:888px;top:258px;width:44px;height:21px;background:linear-gradient(#6a7a7a 0%,#5a6a6a 55%,#44605e 62%,#3e5856 100%);overflow:hidden"><div class="a" style="left:17.6px;top:4px;width:5px;height:13px;background:#2a2e30;border-radius:40% 40% 10% 10%;opacity:.8;transform:skewX(-10deg)"></div></div>
<div class="a" style="left:888px;top:281px;width:44px;height:2px;background:#4a5468;"></div>
<div class="t" style="top:287.80px;font-size:9.6px;color:#909094;left:893px;">04</div>
<svg style="left:909px;top:287px" width="10" height="10" viewBox="0 0 10 10"><path d="M1 9C5 9 5 1 9 1" fill="none" stroke="#8a8a8e" stroke-width="1.3"/></svg>
<svg style="left:876px;top:264.5px" width="7" height="8"><path d="M0 0L7 4 0 8z" fill="#a8d020"/></svg>
<svg style="left:876px;top:284px" width="7" height="8"><path d="M0 0L7 4 0 8z" fill="#3aa8e0"/></svg>
<div class="a" style="left:936px;top:265.0px;width:7px;height:7px;background:#a8d020;"></div>
<div class="a" style="left:936px;top:284.5px;width:7px;height:7px;background:#3aa8e0;"></div>
<div class="a" style="left:974px;top:256px;width:47px;height:42px;background:#2a2a2e;border:1px solid #151517;border-radius:3px;box-shadow:0 1px 3px rgba(0,0,0,.6)"></div>
<div class="a" style="left:976px;top:258px;width:43px;height:21px;background:linear-gradient(#c8d6d4 0%,#bccccb 55%,#8ab4b8 62%,#84aeb0 100%);overflow:hidden"><div class="a" style="left:17.2px;top:4px;width:5px;height:13px;background:#2a2e30;border-radius:40% 40% 10% 10%;opacity:.8;transform:skewX(-10deg)"></div></div>
<div class="a" style="left:976px;top:281px;width:43px;height:2px;background:#7d8aa2;"></div>
<div class="t" style="top:285.80px;font-size:9.6px;color:#e0e0e2;left:981px;">05</div>
<svg style="left:997px;top:286px" width="22" height="10"><rect x="0.5" y="0.5" width="8" height="9" fill="none" stroke="#c8c8ca"/><path d="M3 1v8M6 1v8M1 3.5h7M1 6.5h7" stroke="#c8c8ca" stroke-width="0.8"/><rect x="12" y="1.5" width="9" height="8" fill="none" stroke="#c8c8ca"/><circle cx="16.5" cy="5.5" r="2" fill="#c8c8ca"/></svg>
<svg style="left:965px;top:263.5px" width="7" height="8"><path d="M0 0L7 4 0 8z" fill="#a8d020"/></svg>
<svg style="left:965px;top:282.5px" width="7" height="8"><path d="M0 0L7 4 0 8z" fill="#3aa8e0"/></svg>
<div class="a" style="left:1024px;top:264.0px;width:7px;height:7px;background:#a8d020;"></div>
<div class="a" style="left:1024px;top:283.0px;width:7px;height:7px;background:#3aa8e0;"></div>
<div class="a" style="left:1122px;top:277px;width:48px;height:43px;background:#1a1a1c;border:1px solid #151517;border-radius:3px;box-shadow:0 1px 3px rgba(0,0,0,.6)"></div>
<div class="a" style="left:1124px;top:279px;width:44px;height:21px;background:linear-gradient(#6a7a7a 0%,#5a6a6a 55%,#44605e 62%,#3e5856 100%);overflow:hidden"><div class="a" style="left:17.6px;top:4px;width:5px;height:13px;background:#2a2e30;border-radius:40% 40% 10% 10%;opacity:.8;transform:skewX(-10deg)"></div></div>
<div class="a" style="left:1124px;top:302px;width:44px;height:2px;background:#4a5468;"></div>
<div class="t" style="top:307.80px;font-size:9.6px;color:#909094;left:1129px;">06</div>
<svg style="left:1144px;top:307px" width="10" height="10" viewBox="0 0 10 10"><path d="M1 9C5 9 5 1 9 1" fill="none" stroke="#8a8a8e" stroke-width="1.3"/></svg>
<svg style="left:1113px;top:285.5px" width="7" height="8"><path d="M0 0L7 4 0 8z" fill="#a8d020"/></svg>
<svg style="left:1113px;top:304px" width="7" height="8"><path d="M0 0L7 4 0 8z" fill="#3aa8e0"/></svg>
<div class="a" style="left:1172px;top:286.0px;width:7px;height:7px;background:#a8d020;"></div>
<div class="a" style="left:1172px;top:304.5px;width:7px;height:7px;background:#3aa8e0;"></div>
<div class="a" style="left:1216px;top:63px;width:320px;height:343px;background:#28282c;"></div>
<div class="a" style="left:1529px;top:65px;width:5px;height:37px;background:#58585c;border-radius:3px"></div>
<div class="t" style="top:71.01px;font-size:10.8px;color:#e2e2e4;font-weight:700;left:1226px;">Resolve FX Blur</div>
<svg style="left:1511px;top:73.3px" width="9" height="5" viewBox="0 0 9 5"><path d="M0.5 4.5l4-4 4 4" fill="none" stroke="#8a8a8e" stroke-width="1.1"/></svg>
<div class="a" style="left:1226px;top:86px;width:294px;height:1px;background:#323236;"></div>
<div class="a" style="left:1226px;top:94px;width:292px;height:24px;background:#2d2d31;border:1px solid #1a1a1c;border-radius:3px;overflow:hidden"><div class="a" style="left:0;top:0;width:42px;height:22px;background:#333337;border-right:1px solid #1a1a1c"></div></div>
<div class="t" style="top:101.55px;font-size:9.7px;color:#8e8e92;left:1280px;">Box Blur</div>
<svg style="left:1226px;top:94px" width="42" height="24" viewBox="0 0 42 24"><rect x="12" y="4" width="18" height="14" fill="none" stroke="#5e5e62" stroke-width="1.2"/><path d="M12 20h18" stroke="#5e5e62"/><path d="M21 8C24 12 24 15 21 15S18 12 21 8z" fill="#7e7e82"/></svg>
<div class="a" style="left:1226px;top:124px;width:292px;height:24px;background:#2d2d31;border:1px solid #1a1a1c;border-radius:3px;overflow:hidden"><div class="a" style="left:0;top:0;width:42px;height:22px;background:#333337;border-right:1px solid #1a1a1c"></div></div>
<div class="t" style="top:131.55px;font-size:9.7px;color:#8e8e92;left:1280px;">Directional Blur</div>
<svg style="left:1226px;top:124px" width="42" height="24" viewBox="0 0 42 24"><path d="M19 7.8C22.9 13 22.9 16.9 19 16.9S15.1 13 19 7.8z" fill="#8a8a8e"/><path d="M22 7.8C25.9 13 25.9 16.9 22 16.9S18.1 13 22 7.8z" fill="#5e5e62"/><path d="M25 7.8C28.9 13 28.9 16.9 25 16.9S21.1 13 25 7.8z" fill="#4a4a4e"/></svg>
<div class="a" style="left:1226px;top:153.5px;width:292px;height:24px;background:#2d2d31;border:1px solid #1a1a1c;border-radius:3px;overflow:hidden"><div class="a" style="left:0;top:0;width:42px;height:22px;background:#333337;border-right:1px solid #1a1a1c"></div></div>
<div class="t" style="top:161.05px;font-size:9.7px;color:#8e8e92;left:1280px;">Gaussian Blur</div>
<svg style="left:1226px;top:153.5px" width="42" height="24" viewBox="0 0 42 24"><path d="M6 19C10 19 11 4 15 4S20 19 24 19" fill="none" stroke="#6e6e72" stroke-width="1"/><path d="M24 9.2C27.6 14 27.6 17.6 24 17.6S20.4 14 24 9.2z" fill="#8a8a8e"/></svg>
<div class="a" style="left:1226px;top:183px;width:292px;height:24px;background:#2d2d31;border:1px solid #1a1a1c;border-radius:3px;overflow:hidden"><div class="a" style="left:0;top:0;width:42px;height:22px;background:#333337;border-right:1px solid #1a1a1c"></div></div>
<div class="t" style="top:190.55px;font-size:9.7px;color:#8e8e92;left:1280px;">Lens Blur</div>
<svg style="left:1226px;top:183px" width="42" height="24" viewBox="0 0 42 24"><circle cx="17" cy="11" r="5" fill="none" stroke="#6e6e72" stroke-width="1.2"/><path d="M24 9.2C27.6 14 27.6 17.6 24 17.6S20.4 14 24 9.2z" fill="#8a8a8e"/></svg>
<div class="a" style="left:1226px;top:212.5px;width:292px;height:24px;background:#2d2d31;border:1px solid #1a1a1c;border-radius:3px;overflow:hidden"><div class="a" style="left:0;top:0;width:42px;height:22px;background:#333337;border-right:1px solid #1a1a1c"></div></div>
<div class="t" style="top:220.05px;font-size:9.7px;color:#8e8e92;left:1280px;">Mosaic Blur</div>
<svg style="left:1226px;top:212.5px" width="42" height="24" viewBox="0 0 42 24"><rect x="10" y="8" width="4" height="8" fill="#4a4a4e"/><rect x="14" y="7" width="4" height="9" fill="#5a5a5e"/><path d="M22 8.2C25.6 13 25.6 16.6 22 16.6S18.4 13 22 8.2z" fill="#8a8a8e"/></svg>
<div class="a" style="left:1226px;top:242px;width:292px;height:24px;background:#2d2d31;border:1px solid #1a1a1c;border-radius:3px;overflow:hidden"><div class="a" style="left:0;top:0;width:42px;height:22px;background:#333337;border-right:1px solid #1a1a1c"></div></div>
<div class="t" style="top:249.55px;font-size:9.7px;color:#8e8e92;left:1280px;">Radial Blur</div>
<svg style="left:1226px;top:242px" width="42" height="24" viewBox="0 0 42 24"><circle cx="21" cy="12" r="9" fill="#3a3a3e"/><circle cx="21" cy="12" r="6" fill="#2f2f33"/><path d="M21 8.2C24.6 13 24.6 16.6 21 16.6S17.4 13 21 8.2z" fill="#8a8a8e"/></svg>
<div class="a" style="left:1226px;top:272px;width:292px;height:24px;background:#2d2d31;border:1px solid #1a1a1c;border-radius:3px;overflow:hidden"><div class="a" style="left:0;top:0;width:42px;height:22px;background:#333337;border-right:1px solid #1a1a1c"></div></div>
<div class="t" style="top:279.55px;font-size:9.7px;color:#8e8e92;left:1280px;">Zoom Blur</div>
<svg style="left:1226px;top:272px" width="42" height="24" viewBox="0 0 42 24"><path d="M21 12L35.0 12.0" stroke="#3e3e42" stroke-width="1.5"/><path d="M21 12L30.9 21.9" stroke="#3e3e42" stroke-width="1.5"/><path d="M21 12L21.0 26.0" stroke="#3e3e42" stroke-width="1.5"/><path d="M21 12L11.1 21.9" stroke="#3e3e42" stroke-width="1.5"/><path d="M21 12L7.0 12.0" stroke="#3e3e42" stroke-width="1.5"/><path d="M21 12L11.1 2.1" stroke="#3e3e42" stroke-width="1.5"/><path d="M21 12L21.0 -2.0" stroke="#3e3e42" stroke-width="1.5"/><path d="M21 12L30.9 2.1" stroke="#3e3e42" stroke-width="1.5"/><path d="M21 8.2C24.6 13 24.6 16.6 21 16.6S17.4 13 21 8.2z" fill="#8a8a8e"/></svg>
<div class="t" style="top:322.31px;font-size:10.8px;color:#e2e2e4;font-weight:700;left:1226px;">Resolve FX Color</div>
<svg style="left:1511px;top:324.6px" width="9" height="5" viewBox="0 0 9 5"><path d="M0.5 4.5l4-4 4 4" fill="none" stroke="#8a8a8e" stroke-width="1.1"/></svg>
<div class="a" style="left:1226px;top:338px;width:294px;height:1px;background:#323236;"></div>
<div class="a" style="left:1226px;top:345.5px;width:292px;height:24px;background:#2d2d31;border:1px solid #1a1a1c;border-radius:3px;overflow:hidden"><div class="a" style="left:0;top:0;width:42px;height:22px;background:#333337;border-right:1px solid #1a1a1c"></div></div>
<div class="t" style="top:353.05px;font-size:9.7px;color:#8e8e92;left:1280px;">ACES Transform</div>
<svg style="left:1226px;top:345.5px" width="42" height="24" viewBox="0 0 42 24"><text x="21" y="17" font-family="Liberation Sans" font-size="12" fill="none" stroke="#48484c" stroke-width="0.8" text-anchor="middle">ACES</text></svg>
<div class="a" style="left:1226px;top:375px;width:292px;height:24px;background:#2d2d31;border:1px solid #1a1a1c;border-radius:3px;overflow:hidden"><div class="a" style="left:0;top:0;width:42px;height:22px;background:#333337;border-right:1px solid #1a1a1c"></div></div>
<div class="t" style="top:382.55px;font-size:9.7px;color:#8e8e92;left:1280px;">Chromatic Adaptation</div>
<svg style="left:1226px;top:375px" width="42" height="24" viewBox="0 0 42 24"><circle cx="15" cy="7" r="1" fill="#6a6a6e"/><circle cx="12" cy="10" r="1" fill="#6a6a6e"/><circle cx="13" cy="14" r="1" fill="#6a6a6e"/><circle cx="18" cy="9" r="1" fill="#6a6a6e"/><ellipse cx="24" cy="15" rx="5" ry="3" fill="#8a8a8e"/><circle cx="24" cy="15" r="1.5" fill="#2d2d31"/></svg>
<div class="a" style="left:1226px;top:404px;width:292px;height:2px;background:#2d2d31;border-top:1px solid #1a1a1c"></div>
<div class="a" style="left:0px;top:406px;width:1536px;height:107px;background:#29292d;"></div>
<div class="a" style="left:0px;top:405px;width:1536px;height:1px;background:#151517;"></div>
<div class="a" style="left:0px;top:513px;width:1536px;height:1px;background:#151517;"></div>
<div class="a" style="left:-8.5px;top:410.5px;width:20px;height:16px;border-radius:3px;background:conic-gradient(from 0deg,#a040d0,#e04050 20%,#e08a30 38%,#c8c030 50%,#40b040 65%,#3080e0 82%,#a040d0)"><div class="a" style="left:1.2px;top:1.2px;width:17.6px;height:13.6px;border-radius:2px;background:#29292d"></div></div>
<div class="t" style="top:414.00px;font-size:10.2px;color:#ececee;left:1.539999999999992px;transform:translateX(-50%);">115</div>
<div class="t" style="top:413.90px;font-size:10.4px;color:#e6e6e8;left:17.039999999999992px;">10:04:27:03</div>
<div class="t" style="top:414.10px;font-size:10px;color:#6e6e72;left:82.53999999999999px;">V1</div>
<div class="a" style="left:-8.5px;top:429px;width:104px;height:58px;border-radius:3px;overflow:hidden;background:#080808;"><svg width="104" height="58" style="left:0;top:0;overflow:hidden"><defs><filter id="df115" x="-20%" y="-20%" width="140%" height="140%"><feGaussianBlur stdDeviation="1.6"/></filter></defs><rect width="104" height="58" fill="#070606"/><g filter="url(#df115)" opacity="0.72"><path d="M0 30C10 34 30 44 52 46L56 54 0 56z" fill="#7a4428"/><path d="M0 4C8 6 16 10 14 30L0 34z" fill="#5a3220"/><path d="M48 6C60 4 80 4 100 26L94 34C84 20 70 14 56 16z" fill="#8a5232"/><path d="M44 8C56 8 76 20 82 40L78 56 46 56C40 40 38 20 44 8z" fill="#0a0808"/><path d="M76 40L96 42 94 46 76 46z" fill="#6a4a3a"/><path d="M74 48L94 52 92 56 72 54z" fill="#5a3a2a"/></g></svg></div>
<div class="t" style="top:493.00px;font-size:10.2px;color:#86868a;left:-7.460000000000008px;">A001_C046_0101Z...</div>
<div class="a" style="left:100.3px;top:410.5px;width:20px;height:16px;border-radius:3px;background:conic-gradient(from 0deg,#a040d0,#e04050 20%,#e08a30 38%,#c8c030 50%,#40b040 65%,#3080e0 82%,#a040d0)"><div class="a" style="left:1.2px;top:1.2px;width:17.6px;height:13.6px;border-radius:2px;background:#29292d"></div></div>
<div class="t" style="top:414.00px;font-size:10.2px;color:#ececee;left:110.3px;transform:translateX(-50%);">116</div>
<div class="t" style="top:413.90px;font-size:10.4px;color:#e6e6e8;left:125.8px;">10:08:17:03</div>
<div class="t" style="top:414.10px;font-size:10px;color:#6e6e72;left:191.3px;">V1</div>
<div class="a" style="left:100.3px;top:429px;width:104px;height:58px;border-radius:3px;overflow:hidden;background:#080808;"><svg width="104" height="58" style="left:0;top:0;overflow:hidden"><defs><filter id="df116" x="-20%" y="-20%" width="140%" height="140%"><feGaussianBlur stdDeviation="1.6"/></filter></defs><rect width="104" height="58" fill="#070606"/><g filter="url(#df116)" opacity="0.72"><path d="M24 36C24 24 34 18 52 18S80 24 80 36L76 46 28 46z" fill="#6e4228"/><path d="M44 4C50 2 58 4 60 10L62 48 42 48z" fill="#060505"/><path d="M84 4C92 2 98 6 100 16L100 36C94 40 88 38 84 30z" fill="#5a1816"/></g></svg></div>
<div class="t" style="top:493.00px;font-size:10.2px;color:#86868a;left:101.3px;">A001_C047_0101X'...</div>
<div class="a" style="left:209.1px;top:410.5px;width:20px;height:16px;border-radius:3px;background:conic-gradient(from 0deg,#a040d0,#e04050 20%,#e08a30 38%,#c8c030 50%,#40b040 65%,#3080e0 82%,#a040d0)"><div class="a" style="left:1.2px;top:1.2px;width:17.6px;height:13.6px;border-radius:2px;background:#29292d"></div></div>
<div class="t" style="top:414.00px;font-size:10.2px;color:#ececee;left:219.06px;transform:translateX(-50%);">117</div>
<div class="t" style="top:413.90px;font-size:10.4px;color:#e6e6e8;left:234.56px;">10:13:58:21</div>
<div class="t" style="top:414.10px;font-size:10px;color:#6e6e72;left:300.06px;">V1</div>
<div class="a" style="left:209.1px;top:429px;width:104px;height:58px;border-radius:3px;overflow:hidden;background:#080808;"><svg width="104" height="58" style="left:0;top:0;overflow:hidden"><defs><filter id="df117" x="-20%" y="-20%" width="140%" height="140%"><feGaussianBlur stdDeviation="1.6"/></filter></defs><rect width="104" height="58" fill="#070606"/><g filter="url(#df117)" opacity="0.72"><path d="M40 24C40 18 46 16 52 16S66 18 66 24L66 46 40 46z" fill="#9a6a48"/><ellipse cx="53" cy="14" rx="5" ry="7" fill="#3a2418"/><path d="M46 28h14v18H46z" fill="#1a1010" opacity=".5"/><rect x="1" y="14" width="8" height="38" fill="#7a2624"/><rect x="91" y="14" width="9" height="38" fill="#7a2624"/></g></svg></div>
<div class="t" style="top:493.00px;font-size:10.2px;color:#86868a;left:210.06px;">A001_C048_0101C...</div>
<div class="a" style="left:317.8px;top:410.5px;width:20px;height:16px;border-radius:3px;background:conic-gradient(from 0deg,#a040d0,#e04050 20%,#e08a30 38%,#c8c030 50%,#40b040 65%,#3080e0 82%,#a040d0)"><div class="a" style="left:1.2px;top:1.2px;width:17.6px;height:13.6px;border-radius:2px;background:#29292d"></div></div>
<div class="t" style="top:414.00px;font-size:10.2px;color:#ececee;left:327.82000000000005px;transform:translateX(-50%);">118</div>
<div class="t" style="top:413.90px;font-size:10.4px;color:#e6e6e8;left:343.32000000000005px;">00:38:46:09</div>
<div class="t" style="top:414.10px;font-size:10px;color:#6e6e72;left:408.82000000000005px;">V1</div>
<div class="a" style="left:317.8px;top:429px;width:104px;height:58px;border-radius:3px;overflow:hidden;background:#080808;"><svg width="104" height="58" style="left:0;top:0;overflow:hidden"><rect width="104" height="58" fill="#080808"/><g transform="translate(0 5)"><rect width="104" height="48" fill="#b6beb2"/><rect width="104" height="24" fill="#c2d2ce"/><path d="M0 22C10 20 20 19 34 20C50 16 62 8 72 4C82 0 92 -2 104 0V30H0z" fill="#5e806a"/><path d="M50 26C60 18 70 10 82 6C92 3 98 4 104 6V30H48z" fill="#40604a"/><path d="M0 27H104V31H0z" fill="#7e887a"/><rect x="0" y="31" width="104" height="17" fill="#bec6ba"/><g transform="translate(16 16) scale(1)"><rect x="2" y="0" width="6" height="14" rx="3" fill="#8a5a36"/><rect x="3" y="-4" width="4" height="6" fill="#7a5a44"/><path d="M3 13v8M7 13v8" stroke="#4a3020" stroke-width="1.6"/></g></g></svg></div>
<div class="t" style="top:493.00px;font-size:10.2px;color:#86868a;left:318.82000000000005px;">A001_C001_0101F...</div>
<div class="a" style="left:426.6px;top:410.5px;width:20px;height:16px;border-radius:3px;background:conic-gradient(from 0deg,#a040d0,#e04050 20%,#e08a30 38%,#c8c030 50%,#40b040 65%,#3080e0 82%,#a040d0)"><div class="a" style="left:1.2px;top:1.2px;width:17.6px;height:13.6px;border-radius:2px;background:#29292d"></div></div>
<div class="t" style="top:414.00px;font-size:10.2px;color:#ececee;left:436.58000000000004px;transform:translateX(-50%);">119</div>
<div class="t" style="top:413.90px;font-size:10.4px;color:#e6e6e8;left:452.08000000000004px;">00:38:32:22</div>
<div class="t" style="top:414.10px;font-size:10px;color:#6e6e72;left:517.58px;">V1</div>
<div class="a" style="left:426.6px;top:429px;width:104px;height:58px;border-radius:3px;overflow:hidden;background:#080808;"><svg width="104" height="58" style="left:0;top:0;overflow:hidden"><rect width="104" height="58" fill="#080808"/><g transform="translate(0 5)"><rect width="104" height="48" fill="#b6beb2"/><rect width="104" height="24" fill="#c2d2ce"/><path d="M0 6C10 4 20 2 34 3C50 0 70 0 104 0V28H0z" fill="#5e806a"/><path d="M0 16C20 8 30 4 50 6C60 2 80 4 104 8V28H0z" fill="#40604a"/><path d="M0 27H104V31H0z" fill="#7e887a"/><rect x="0" y="31" width="104" height="17" fill="#bec6ba"/><g transform="translate(62 18) scale(0.85)"><rect x="2" y="0" width="6" height="14" rx="3" fill="#8a5a36"/><rect x="3" y="-4" width="4" height="6" fill="#7a5a44"/><path d="M3 13v8M7 13v8" stroke="#4a3020" stroke-width="1.6"/></g></g></svg></div>
<div class="t" style="top:493.00px;font-size:10.2px;color:#86868a;left:427.58000000000004px;">A001_C002_0101Z...</div>
<div class="a" style="left:535.3px;top:410.5px;width:20px;height:16px;border-radius:3px;background:conic-gradient(from 0deg,#a040d0,#e04050 20%,#e08a30 38%,#c8c030 50%,#40b040 65%,#3080e0 82%,#a040d0)"><div class="a" style="left:1.2px;top:1.2px;width:17.6px;height:13.6px;border-radius:2px;background:#29292d"></div></div>
<div class="t" style="top:414.00px;font-size:10.2px;color:#ececee;left:545.34px;transform:translateX(-50%);">120</div>
<div class="t" style="top:413.90px;font-size:10.4px;color:#e6e6e8;left:560.84px;">00:41:21:12</div>
<div class="t" style="top:414.10px;font-size:10px;color:#6e6e72;left:626.34px;">V1</div>
<div class="a" style="left:535.3px;top:429px;width:104px;height:58px;border-radius:3px;overflow:hidden;background:#080808;"><svg width="104" height="58" style="left:0;top:0;overflow:hidden"><rect width="104" height="58" fill="#080808"/><g transform="translate(0 5)"><rect width="104" height="48" fill="#b6beb2"/><rect width="104" height="24" fill="#c2d2ce"/><path d="M0 14C20 10 40 8 60 9C80 8 92 10 104 12V26H0z" fill="#5e806a"/><path d="M40 20C60 14 80 12 104 14V26H40z" fill="#40604a"/><path d="M0 27H104V31H0z" fill="#7e887a"/><rect x="0" y="24" width="104" height="5" fill="#6aa2aa"/><rect x="0" y="31" width="104" height="17" fill="#bec6ba"/><g transform="translate(26 20)"><ellipse cx="8" cy="6" rx="9" ry="3.5" fill="#5a3420"/><path d="M1 6l-4 6M4 8l-2 7M12 8l3 7M16 6l2 7" stroke="#3a2214" stroke-width="1.3"/><path d="M15 4l5-5 2 1-4 6z" fill="#5a3420"/><rect x="6" y="-3" width="3" height="6" fill="#c8a888"/></g></g></svg></div>
<div class="t" style="top:493.00px;font-size:10.2px;color:#86868a;left:536.34px;">A001_C005_01018I...</div>
<div class="a" style="left:644.1px;top:410.5px;width:20px;height:16px;border-radius:3px;background:conic-gradient(from 0deg,#a040d0,#e04050 20%,#e08a30 38%,#c8c030 50%,#40b040 65%,#3080e0 82%,#a040d0)"><div class="a" style="left:1.2px;top:1.2px;width:17.6px;height:13.6px;border-radius:2px;background:#29292d"></div></div>
<div class="t" style="top:414.00px;font-size:10.2px;color:#ececee;left:654.1px;transform:translateX(-50%);">121</div>
<div class="t" style="top:413.90px;font-size:10.4px;color:#e6e6e8;left:669.6px;">00:42:15:10</div>
<div class="t" style="top:414.10px;font-size:10px;color:#6e6e72;left:735.1px;">V1</div>
<div class="a" style="left:644.1px;top:429px;width:104px;height:58px;border-radius:3px;overflow:hidden;background:#080808;"><svg width="104" height="58" style="left:0;top:0;overflow:hidden"><rect width="104" height="58" fill="#080808"/><g transform="translate(0 5)"><rect width="104" height="48" fill="#b6beb2"/><rect width="104" height="24" fill="#c2d2ce"/><path d="M0 16C20 12 40 12 60 10C80 6 90 0 104 0V28H0z" fill="#5e806a"/><path d="M50 24C70 16 84 8 104 4V28H50z" fill="#40604a"/><path d="M0 27H104V31H0z" fill="#7e887a"/><rect x="0" y="31" width="104" height="17" fill="#bec6ba"/><g transform="translate(76 18) scale(0.85)"><rect x="2" y="0" width="6" height="14" rx="3" fill="#8a5a36"/><rect x="3" y="-4" width="4" height="6" fill="#7a5a44"/><path d="M3 13v8M7 13v8" stroke="#4a3020" stroke-width="1.6"/></g></g></svg></div>
<div class="t" style="top:493.00px;font-size:10.2px;color:#86868a;left:645.1px;">A001_C005_01018I...</div>
<div class="a" style="left:752.9px;top:410.5px;width:20px;height:16px;border-radius:3px;background:conic-gradient(from 0deg,#a040d0,#e04050 20%,#e08a30 38%,#c8c030 50%,#40b040 65%,#3080e0 82%,#a040d0)"><div class="a" style="left:1.2px;top:1.2px;width:17.6px;height:13.6px;border-radius:2px;background:#29292d"></div></div>
<div class="t" style="top:414.00px;font-size:10.2px;color:#ececee;left:762.86px;transform:translateX(-50%);">122</div>
<div class="t" style="top:413.90px;font-size:10.4px;color:#e6e6e8;left:778.36px;">00:43:32:11</div>
<div class="t" style="top:414.10px;font-size:10px;color:#6e6e72;left:843.86px;">V1</div>
<div class="a" style="left:752.9px;top:429px;width:104px;height:58px;border-radius:3px;overflow:hidden;background:#080808;"><svg width="104" height="58" style="left:0;top:0;overflow:hidden"><rect width="104" height="58" fill="#080808"/><g transform="translate(0 5)"><rect width="104" height="48" fill="#b6beb2"/><rect width="104" height="24" fill="#c2d2ce"/><path d="M0 14C20 12 50 11 104 12V26H0z" fill="#5e806a"/><path d="M0 20C30 16 60 15 104 16V26H0z" fill="#40604a"/><path d="M0 27H104V31H0z" fill="#7e887a"/><rect x="0" y="24" width="104" height="5" fill="#6aa2aa"/><rect x="0" y="31" width="104" height="17" fill="#bec6ba"/><g transform="translate(36 20) scale(0.85)"><rect x="2" y="0" width="6" height="14" rx="3" fill="#8a5a36"/><rect x="3" y="-4" width="4" height="6" fill="#7a5a44"/><path d="M3 13v8M7 13v8" stroke="#4a3020" stroke-width="1.6"/></g></g></svg></div>
<div class="t" style="top:493.00px;font-size:10.2px;color:#86868a;left:753.86px;">A001_C005_01018I...</div>
<div class="a" style="left:861.6px;top:410.5px;width:20px;height:16px;border-radius:3px;background:conic-gradient(from 0deg,#a040d0,#e04050 20%,#e08a30 38%,#c8c030 50%,#40b040 65%,#3080e0 82%,#a040d0)"><div class="a" style="left:1.2px;top:1.2px;width:17.6px;height:13.6px;border-radius:2px;background:#29292d"></div></div>
<div class="t" style="top:414.00px;font-size:10.2px;color:#ececee;left:871.62px;transform:translateX(-50%);">123</div>
<div class="t" style="top:413.90px;font-size:10.4px;color:#e6e6e8;left:887.12px;">00:44:08:16</div>
<div class="t" style="top:414.10px;font-size:10px;color:#6e6e72;left:952.62px;">V1</div>
<div class="a" style="left:861.6px;top:429px;width:104px;height:58px;border-radius:3px;overflow:hidden;background:#080808;"><svg width="104" height="58" style="left:0;top:0;overflow:hidden"><rect width="104" height="58" fill="#080808"/><g transform="translate(0 5)"><rect width="104" height="48" fill="#b6beb2"/><rect width="104" height="24" fill="#c2d2ce"/><path d="M0 16C20 14 40 14 60 12C80 8 90 2 104 0V28H0z" fill="#5e806a"/><path d="M56 24C70 18 84 10 104 6V28H56z" fill="#40604a"/><path d="M0 27H104V31H0z" fill="#7e887a"/><rect x="0" y="31" width="104" height="17" fill="#bec6ba"/><g transform="translate(50 3)"><path d="M2 14C2 8 6 6 12 6L18 4 20 0 24 1 23 8C22 14 20 18 14 18L4 20z" fill="#9a6a40"/><path d="M3 18v20M7 19v19M15 17v21M19 14v22" stroke="#6a4428" stroke-width="2"/><rect x="10" y="-1" width="5" height="9" fill="#6a5040"/></g></g></svg></div>
<div class="t" style="top:493.00px;font-size:10.2px;color:#86868a;left:862.62px;">A001_C005_01018I...</div>
<div class="a" style="left:970.4px;top:410.5px;width:20px;height:16px;border-radius:3px;background:conic-gradient(from 0deg,#a040d0,#e04050 20%,#e08a30 38%,#c8c030 50%,#40b040 65%,#3080e0 82%,#a040d0)"><div class="a" style="left:1.2px;top:1.2px;width:17.6px;height:13.6px;border-radius:2px;background:#29292d"></div></div>
<div class="t" style="top:414.00px;font-size:10.2px;color:#ececee;left:980.38px;transform:translateX(-50%);">124</div>
<div class="t" style="top:413.90px;font-size:10.4px;color:#e6e6e8;left:995.88px;">00:43:10:12</div>
<div class="t" style="top:414.10px;font-size:10px;color:#6e6e72;left:1061.38px;">V1</div>
<div class="a" style="left:970.4px;top:429px;width:104px;height:58px;border-radius:3px;overflow:hidden;background:#080808;"><svg width="104" height="58" style="left:0;top:0;overflow:hidden"><rect width="104" height="58" fill="#080808"/><g transform="translate(0 5)"><rect width="104" height="48" fill="#b6beb2"/><rect width="104" height="24" fill="#c2d2ce"/><path d="M0 14C20 10 40 10 56 8C70 4 84 0 104 0V28H0z" fill="#5e806a"/><path d="M30 22C50 16 70 8 104 6V28H30z" fill="#40604a"/><path d="M0 27H104V31H0z" fill="#7e887a"/><rect x="0" y="31" width="104" height="17" fill="#bec6ba"/><g transform="translate(70 18) scale(0.85)"><rect x="2" y="0" width="6" height="14" rx="3" fill="#8a5a36"/><rect x="3" y="-4" width="4" height="6" fill="#7a5a44"/><path d="M3 13v8M7 13v8" stroke="#4a3020" stroke-width="1.6"/></g></g></svg></div>
<div class="t" style="top:493.00px;font-size:10.2px;color:#86868a;left:971.38px;">A001_C007_0101C...</div>
<div class="a" style="left:1079.1px;top:410.5px;width:20px;height:16px;border-radius:3px;background:conic-gradient(from 0deg,#a040d0,#e04050 20%,#e08a30 38%,#c8c030 50%,#40b040 65%,#3080e0 82%,#a040d0)"><div class="a" style="left:1.2px;top:1.2px;width:17.6px;height:13.6px;border-radius:2px;background:#29292d"></div></div>
<div class="t" style="top:414.00px;font-size:10.2px;color:#ececee;left:1089.14px;transform:translateX(-50%);">125</div>
<div class="t" style="top:413.90px;font-size:10.4px;color:#e6e6e8;left:1104.64px;">00:44:41:08</div>
<div class="t" style="top:414.10px;font-size:10px;color:#6e6e72;left:1170.14px;">V1</div>
<div class="a" style="left:1079.1px;top:429px;width:104px;height:58px;border-radius:3px;overflow:hidden;background:#080808;"><svg width="104" height="58" style="left:0;top:0;overflow:hidden"><defs><linearGradient id="sea125" x1="0" y1="0" x2="0" y2="1"><stop offset="0" stop-color="#50a4ac"/><stop offset="1" stop-color="#8ab8b6"/></linearGradient></defs><rect width="104" height="58" fill="#080808"/><g transform="translate(0 5)"><rect width="104" height="48" fill="url(#sea125)"/><rect width="104" height="21" fill="#c4d2ce"/><rect y="35" width="104" height="13" fill="#98c0bc" opacity=".5"/><path d="M16 26C16 20 22 18 30 18L42 16 48 10 52 12 52 20C50 24 46 26 42 28L40 30 20 32z" fill="#4e3222"/><path d="M17 30l-2 12M22 31l1 10M38 29l3 11M42 27l3 10" stroke="#3a2416" stroke-width="2"/><path d="M26 8h6v12h-6z" fill="#c8a080"/><rect x="27" y="4" width="4" height="5" fill="#3a2a20"/><path d="M26 18h8v6h-8z" fill="#2a2a30"/></g></svg></div>
<div class="t" style="top:493.00px;font-size:10.2px;color:#86868a;left:1080.14px;">A001_C009_0101L...</div>
<div class="a" style="left:1187.9px;top:410.5px;width:20px;height:16px;border-radius:3px;background:conic-gradient(from 0deg,#a040d0,#e04050 20%,#e08a30 38%,#c8c030 50%,#40b040 65%,#3080e0 82%,#a040d0)"><div class="a" style="left:1.2px;top:1.2px;width:17.6px;height:13.6px;border-radius:2px;background:#29292d"></div></div>
<div class="t" style="top:414.00px;font-size:10.2px;color:#ececee;left:1197.9px;transform:translateX(-50%);">126</div>
<div class="t" style="top:413.90px;font-size:10.4px;color:#e6e6e8;left:1213.4px;">00:45:09:20</div>
<div class="t" style="top:414.10px;font-size:10px;color:#6e6e72;left:1278.9px;">V1</div>
<div class="a" style="left:1187.9px;top:429px;width:104px;height:58px;border-radius:3px;overflow:hidden;background:#080808;"><svg width="104" height="58" style="left:0;top:0;overflow:hidden"><defs><linearGradient id="sea126" x1="0" y1="0" x2="0" y2="1"><stop offset="0" stop-color="#50a4ac"/><stop offset="1" stop-color="#8ab8b6"/></linearGradient></defs><rect width="104" height="58" fill="#080808"/><g transform="translate(0 5)"><rect width="104" height="48" fill="url(#sea126)"/><rect width="104" height="24" fill="#c4d2ce"/><rect y="38" width="104" height="10" fill="#98c0bc" opacity=".5"/><ellipse cx="26" cy="26" rx="9" ry="9" fill="#b88c62"/><path d="M21 32l-1 8M31 32l1 8" stroke="#a07850" stroke-width="2.2"/><path d="M22 6h8v14h-8z" fill="#c8a880"/><rect x="23" y="3" width="5" height="5" fill="#8a6a50"/><ellipse cx="26" cy="42" rx="12" ry="3" fill="#e0ecea" opacity=".6"/></g></svg></div>
<div class="t" style="top:493.00px;font-size:10.2px;color:#86868a;left:1188.9px;">A001_C010_0101E'...</div>
<div class="a" style="left:1296.7px;top:410.5px;width:20px;height:16px;border-radius:3px;background:conic-gradient(from 0deg,#a040d0,#e04050 20%,#e08a30 38%,#c8c030 50%,#40b040 65%,#3080e0 82%,#a040d0)"><div class="a" style="left:1.2px;top:1.2px;width:17.6px;height:13.6px;border-radius:2px;background:#29292d"></div></div>
<div class="t" style="top:414.00px;font-size:10.2px;color:#ececee;left:1306.66px;transform:translateX(-50%);">127</div>
<div class="t" style="top:413.90px;font-size:10.4px;color:#e6e6e8;left:1322.16px;">00:45:28:08</div>
<div class="t" style="top:414.10px;font-size:10px;color:#6e6e72;left:1387.66px;">V1</div>
<div class="a" style="left:1296.7px;top:429px;width:104px;height:58px;border-radius:3px;overflow:hidden;background:#080808;box-shadow:0 0 0 1.5px #d8504a;"><svg width="104" height="58" style="left:0;top:0;overflow:hidden"><defs><linearGradient id="sea127" x1="0" y1="0" x2="0" y2="1"><stop offset="0" stop-color="#50a4ac"/><stop offset="1" stop-color="#8ab8b6"/></linearGradient></defs><rect width="104" height="58" fill="#080808"/><g transform="translate(0 5)"><rect width="104" height="48" fill="url(#sea127)"/><rect width="104" height="28.5" fill="#c4d2ce"/><rect y="42.5" width="104" height="5.5" fill="#98c0bc" opacity=".5"/><ellipse cx="36" cy="27" rx="6" ry="8" fill="#4e4034"/><path d="M32 33l0 7M40 33l0 7" stroke="#3a3028" stroke-width="2"/><path d="M32 12h7v10h-7z" fill="#a89478"/><rect x="37" y="14" width="6" height="8" fill="#5a4a3c"/><ellipse cx="36" cy="40" rx="9" ry="2.5" fill="#e0ecea" opacity=".6"/></g></svg></div>
<div class="t" style="top:493.00px;font-size:10.2px;color:#ececee;left:1297.66px;">A001_C011_0101V...</div>
<div class="a" style="left:1405.4px;top:410.5px;width:20px;height:16px;border-radius:3px;background:conic-gradient(from 0deg,#a040d0,#e04050 20%,#e08a30 38%,#c8c030 50%,#40b040 65%,#3080e0 82%,#a040d0)"><div class="a" style="left:1.2px;top:1.2px;width:17.6px;height:13.6px;border-radius:2px;background:#29292d"></div></div>
<div class="t" style="top:414.00px;font-size:10.2px;color:#ececee;left:1415.42px;transform:translateX(-50%);">128</div>
<div class="t" style="top:413.90px;font-size:10.4px;color:#e6e6e8;left:1430.92px;">00:45:45:04</div>
<div class="t" style="top:414.10px;font-size:10px;color:#6e6e72;left:1496.42px;">V1</div>
<div class="a" style="left:1405.4px;top:429px;width:104px;height:58px;border-radius:3px;overflow:hidden;background:#080808;"><svg width="104" height="58" style="left:0;top:0;overflow:hidden"><defs><linearGradient id="sea128" x1="0" y1="0" x2="0" y2="1"><stop offset="0" stop-color="#50a4ac"/><stop offset="1" stop-color="#8ab8b6"/></linearGradient></defs><rect width="104" height="58" fill="#080808"/><g transform="translate(0 5)"><rect width="104" height="48" fill="url(#sea128)"/><rect width="104" height="19.5" fill="#c4d2ce"/><rect y="33.5" width="104" height="14.5" fill="#98c0bc" opacity=".5"/><path d="M22 0H66L64 14C60 22 50 24 44 22L34 22C28 22 24 16 22 8z" fill="#6a4a30"/><path d="M26 14l-2 22M34 20l2 14M54 20l6 14M62 14l-2 14" stroke="#3a2418" stroke-width="3.2"/><ellipse cx="40" cy="40" rx="22" ry="6" fill="#e4eeec" opacity=".75"/></g></svg></div>
<div class="t" style="top:493.00px;font-size:10.2px;color:#86868a;left:1406.42px;">A001_C011_0101V...</div>
<div class="a" style="left:1514.2px;top:410.5px;width:20px;height:16px;border-radius:3px;background:conic-gradient(from 0deg,#a040d0,#e04050 20%,#e08a30 38%,#c8c030 50%,#40b040 65%,#3080e0 82%,#a040d0)"><div class="a" style="left:1.2px;top:1.2px;width:17.6px;height:13.6px;border-radius:2px;background:#29292d"></div></div>
<div class="t" style="top:414.00px;font-size:10.2px;color:#ececee;left:1524.18px;transform:translateX(-50%);">129</div>
<div class="a" style="left:1514.2px;top:429px;width:104px;height:58px;border-radius:3px;overflow:hidden;background:#080808;"><svg width="104" height="58" style="left:0;top:0;overflow:hidden"><rect width="104" height="58" fill="#080808"/><g transform="translate(0 5)"><rect width="104" height="48" fill="#c0c8bc"/><path d="M0 0H104V28H0z" fill="#4a7050"/><path d="M0 10C10 20 20 30 30 48H0z" fill="#b8c4b8"/></g></svg></div>
<div class="t" style="top:493.00px;font-size:10.2px;color:#86868a;left:1515.18px;">A001_C011</div>
<div class="t" style="top:414.00px;font-size:10.2px;color:#ececee;left:-0.5px;">15</div>
<div class="a" style="left:0px;top:406px;width:6px;height:107px;background:linear-gradient(90deg,rgba(20,20,22,.8),rgba(20,20,22,0));"></div>
<div class="a" style="left:1504px;top:406px;width:32px;height:107px;background:linear-gradient(90deg,rgba(20,20,22,0),rgba(20,20,22,.85));"></div>
<div class="a" style="left:1227px;top:507px;width:149px;height:4.5px;background:#5a5a5e;border-radius:2px"></div>
<div class="a" style="left:0px;top:514px;width:1536px;height:29px;background:#262629;"></div>
<div class="a" style="left:0px;top:542px;width:1536px;height:1px;background:#141416;"></div>
<div class="a" style="left:47px;top:514px;width:1px;height:28px;background:#303034;"></div>
<div class="a" style="left:95px;top:514px;width:1px;height:28px;background:#303034;"></div>
<div class="a" style="left:143px;top:514px;width:1px;height:28px;background:#303034;"></div>
<div class="a" style="left:191px;top:514px;width:1px;height:28px;background:#303034;"></div>
<div class="a" style="left:239px;top:514px;width:1px;height:28px;background:#303034;"></div>
<div class="a" style="left:617px;top:514px;width:1px;height:28px;background:#303034;"></div>
<div class="a" style="left:672px;top:514px;width:1px;height:28px;background:#303034;"></div>
<div class="a" style="left:729px;top:514px;width:1px;height:28px;background:#303034;"></div>
<div class="a" style="left:785px;top:514px;width:1px;height:28px;background:#303034;"></div>
<div class="a" style="left:840px;top:514px;width:1px;height:28px;background:#303034;"></div>
<div class="a" style="left:897px;top:514px;width:1px;height:28px;background:#303034;"></div>
<div class="a" style="left:952px;top:514px;width:1px;height:28px;background:#303034;"></div>
<div class="a" style="left:1008px;top:514px;width:1px;height:28px;background:#303034;"></div>
<div class="a" style="left:1064px;top:514px;width:1px;height:28px;background:#303034;"></div>
<div class="a" style="left:1440px;top:514px;width:1px;height:28px;background:#303034;"></div>
<div class="a" style="left:1489px;top:514px;width:1px;height:28px;background:#303034;"></div>
<svg style="left:12px;top:518px" width="24" height="20" viewBox="0 0 24 20"><rect x="7" y="3" width="10" height="10" rx="2" fill="none" stroke="#e6e6e8" stroke-width="1.3" transform="skewY(-10)"/><path d="M17 7l6-3v10l-6-2z" fill="none" stroke="#e6e6e8" stroke-width="1.3"/><circle cx="20" cy="9" r="2" fill="none" stroke="#e6e6e8"/><circle cx="5" cy="15" r="3.6" fill="none" stroke="#e6e6e8" stroke-width="1.3" stroke-dasharray="2 1.2"/></svg>
<svg style="left:63px;top:520px" width="19" height="16" viewBox="0 0 19 16"><circle cx="5" cy="5" r="0.9" fill="#8e8e92"/><circle cx="5" cy="8" r="0.9" fill="#8e8e92"/><circle cx="5" cy="11" r="0.9" fill="#8e8e92"/><circle cx="8" cy="5" r="0.9" fill="#8e8e92"/><circle cx="8" cy="8" r="0.9" fill="#8e8e92"/><circle cx="8" cy="11" r="0.9" fill="#8e8e92"/><circle cx="11" cy="5" r="0.9" fill="#8e8e92"/><circle cx="11" cy="8" r="0.9" fill="#8e8e92"/><circle cx="11" cy="11" r="0.9" fill="#8e8e92"/><circle cx="14" cy="5" r="0.9" fill="#8e8e92"/><circle cx="14" cy="8" r="0.9" fill="#8e8e92"/><circle cx="14" cy="11" r="0.9" fill="#8e8e92"/><path d="M1 4V1h3M15 1h3v3M1 12v3h3M18 12v3h-3" fill="none" stroke="#8e8e92" stroke-width="1"/></svg>
<svg style="left:110px;top:520px" width="16" height="16" viewBox="0 0 16 16"><circle cx="8" cy="8" r="7" fill="none" stroke="#8e8e92" stroke-width="1.2"/><circle cx="8" cy="8" r="1.8" fill="#8e8e92"/></svg>
<svg style="left:156px;top:519px" width="22" height="19" viewBox="0 0 22 19"><path d="M15 11A7 7 0 1 0 8 16" fill="none" stroke="#8e8e92" stroke-width="1.2"/><circle cx="8" cy="9" r="1.8" fill="#8e8e92"/><text x="15" y="17" font-family="Liberation Sans" font-size="6" fill="#8e8e92" text-anchor="middle">HDR</text></svg>
<svg style="left:205px;top:519px" width="20" height="18" viewBox="0 0 20 18"><circle cx="13" cy="5" r="3.5" fill="#909094"/><circle cx="7" cy="13" r="3" fill="none" stroke="#8e8e92" stroke-width="1.2"/><circle cx="15" cy="13" r="3" fill="#5a5a5e"/><path d="M2 6c1-3 4-4 6-3M2 6l0-3M2 6l3 0" fill="none" stroke="#8e8e92"/></svg>
<svg style="left:253px;top:520px" width="22" height="16" viewBox="0 0 22 16"><rect x="6" y="1" width="15" height="13" fill="none" stroke="#6a6a6e"/><circle cx="16" cy="6" r="2" fill="#8a8a8e"/><path d="M12 13c0-3 8-3 8 0" fill="#8a8a8e"/><path d="M1 5h5M2 8h4M1 11h5" stroke="#6a6a6e"/></svg>
<svg style="left:579px;top:517px" width="22" height="20" viewBox="0 0 22 20"><path d="M2 18C10 18 8 4 18 4" fill="none" stroke="#909094" stroke-width="1.4"/><path d="M2 2v16h16" fill="none" stroke="#4a4a4e" stroke-width="0.8" stroke-dasharray="1.5 1.5"/><path d="M7 2v16M12 2v16M2 8h16M2 13h16" stroke="#4a4a4e" stroke-width="0.6"/><circle cx="20" cy="1.5" r="1.3" fill="#e04a4a"/></svg>
<svg style="left:635px;top:519px" width="19" height="18" viewBox="0 0 19 18"><path d="M9.5 1L18 6v8l-8.5 5L1 14V6z" fill="none" stroke="#6e6e72"/><path d="M1 6l17 8M18 6L1 14M9.5 1v18" stroke="#6e6e72" stroke-width="0.8"/></svg>
<svg style="left:692px;top:519px" width="16" height="17" viewBox="0 0 16 17"><path d="M1 16l8-8" stroke="#909094" stroke-width="1.6"/><path d="M8 5l3 3M10 2l4 4-3 3-4-4z" fill="#909094" stroke="#909094"/></svg>
<svg style="left:746px;top:519px" width="20" height="17" viewBox="0 0 20 17"><ellipse cx="10" cy="8.5" rx="8.5" ry="7" fill="none" stroke="#909094" stroke-width="1.3"/><rect x="0" y="7" width="3" height="3" fill="#909094"/><rect x="17" y="7" width="3" height="3" fill="#909094"/><rect x="8.5" y="0" width="3" height="3" fill="#909094"/><rect x="8.5" y="14" width="3" height="3" fill="#909094"/></svg>
<svg style="left:802px;top:518px" width="20" height="19" viewBox="0 0 20 19"><circle cx="10" cy="9.5" r="5" fill="none" stroke="#909094" stroke-width="1.2"/><circle cx="10" cy="9.5" r="1.4" fill="#909094"/><path d="M10 1v4M10 14v4M1 9.5h4M15 9.5h4" stroke="#909094"/><path d="M1 4V1h3M19 4V1h-3M1 15v3h3M19 15v3h-3" fill="none" stroke="#5e5e62"/></svg>
<svg style="left:857px;top:519px" width="21" height="17" viewBox="0 0 21 17"><rect x="1" y="1" width="19" height="15" fill="none" stroke="#5e5e62"/><circle cx="10.5" cy="7" r="2.5" fill="#8a8a8e"/><path d="M5 15c0-5 11-5 11 0" fill="#8a8a8e"/><path d="M3 1v15M18 1v15" stroke="#4a4a4e" stroke-dasharray="1 1"/></svg>
<svg style="left:915px;top:518px" width="18" height="19" viewBox="0 0 18 19"><path d="M6 2C9 6 10 8 10 10a4 4 0 0 1-8 0C2 8 3 6 6 2z" fill="#909094"/><path d="M12 8l5 9H7z" fill="#909094"/></svg>
<svg style="left:969px;top:518px" width="22" height="20" viewBox="0 0 22 20"><rect x="1" y="2" width="20" height="17" fill="#e6e6e8"/><path d="M1 2h8v8H1z" fill="#2a2a2e" opacity="0.0"/><circle cx="14" cy="10" r="3" fill="#2a2a2e"/><path d="M1 2h4v17H1z" fill="#6a6a6e"/><path d="M1 2h20v4H1z" fill="#6a6a6e"/><path d="M5 6h10c-4 0-6 4-10 6z" fill="#e6e6e8"/></svg>
<svg style="left:1026px;top:519px" width="21" height="17" viewBox="0 0 21 17"><path d="M4 5h14v10H4" fill="none" stroke="#909094" stroke-width="1.2"/><path d="M4 3v4M2 5h4" stroke="#909094"/><path d="M15 1l3 3-3 3M6 10l-3 3 3 3" fill="none" stroke="#909094" stroke-width="1.1"/></svg>
<svg style="left:1083px;top:520px" width="18" height="15" viewBox="0 0 18 15"><rect x="0.5" y="0.5" width="17" height="14" rx="2" fill="none" stroke="#5e5e62"/><text x="9" y="11" font-family="Liberation Sans" font-size="8" fill="#6e6e72" text-anchor="middle">3D</text></svg>
<svg style="left:1406px;top:520px" width="20" height="16" viewBox="0 0 20 16"><path d="M6 1l7 7-7 7-6-7z" fill="#5a5a5e"/><path d="M11 1l7 7-7 7-6-7z" fill="#8a8a8e"/></svg>
<svg style="left:1455px;top:519px" width="18" height="17" viewBox="0 0 18 17"><path d="M1 1v15h16" fill="none" stroke="#d0d0d2" stroke-width="1.3"/><path d="M3 13l2-7 2 5 2-6 2 5 2-3 2 4 2-2" fill="none" stroke="#d0d0d2" stroke-width="1.2"/></svg>
<svg style="left:1504px;top:520px" width="16" height="16" viewBox="0 0 16 16"><circle cx="8" cy="8" r="7" fill="none" stroke="#b0b0b4" stroke-width="1.2"/><path d="M8 7v5" stroke="#b0b0b4" stroke-width="1.6"/><circle cx="8" cy="4.5" r="1" fill="#b0b0b4"/></svg>
<div class="a" style="left:0px;top:543px;width:1536px;height:20px;background:#1e1e22;"></div>
<div class="a" style="left:576px;top:543px;width:1px;height:245px;background:#141416;"></div>
<div class="a" style="left:1151px;top:543px;width:1px;height:245px;background:#141416;"></div>
<div class="t" style="top:548.11px;font-size:10.6px;color:#e4e4e6;font-weight:700;left:8px;">Camera Raw</div>
<div class="t" style="top:548.40px;font-size:10px;color:#e4e4e6;font-weight:700;left:519.5px;">RED</div>
<div class="a" style="left:546px;top:543px;width:1px;height:20px;background:#141416;"></div>
<svg style="left:553px;top:551px" width="15" height="4" viewBox="0 0 15 4"><circle cx="1.8" cy="2" r="1.5" fill="#8a8a8e"/><circle cx="7.5" cy="2" r="1.5" fill="#8a8a8e"/><circle cx="13.2" cy="2" r="1.5" fill="#8a8a8e"/></svg>
<div class="a" style="left:0px;top:563px;width:576px;height:196px;background:#2a2a2e;"></div>
<div class="a" style="left:0px;top:759px;width:576px;height:29px;background:#252529;"></div>
<div class="a" style="left:0px;top:758px;width:576px;height:1px;background:#19191b;"></div>
<div class="a" style="left:225px;top:563px;width:1px;height:196px;background:#1f1f22;"></div>
<div class="a" style="left:400px;top:563px;width:1px;height:196px;background:#1f1f22;"></div>
<div class="a" style="left:356px;top:765px;width:99px;height:18px;border:1px solid #2e2e32;border-radius:9px"></div>
<div class="a" style="left:464px;top:765px;width:95px;height:18px;border:1px solid #2e2e32;border-radius:9px"></div>
<div class="t" style="top:769.30px;font-size:9.6px;color:#4a4a4e;left:405.5px;transform:translateX(-50%);">Use Changes</div>
<div class="t" style="top:769.30px;font-size:9.6px;color:#4a4a4e;left:511.5px;transform:translateX(-50%);">Use Settings</div>
<div class="t" style="top:570.41px;font-size:10.6px;color:#8a8a8e;right:1455.5px;">Decode Quality</div>
<div class="a" style="left:86px;top:567.8px;width:130px;height:15px;background:#1c1c1e;border-radius:2px"></div>
<div class="t" style="top:570.55px;font-size:10.3px;color:#b8b8bc;left:94.5px;">Use project setting</div>
<svg style="left:201px;top:573.3px" width="8" height="5" viewBox="0 0 8 5"><path d="M0.5 0.5l3.5 3.5 3.5-3.5" fill="none" stroke="#a0a0a4" stroke-width="1.1"/></svg>
<div class="t" style="top:586.36px;font-size:10.6px;color:#8a8a8e;right:1455.5px;">Decode Using</div>
<div class="a" style="left:86px;top:583.75px;width:130px;height:15px;background:#1c1c1e;border-radius:2px"></div>
<div class="t" style="top:586.50px;font-size:10.3px;color:#b8b8bc;left:94.5px;">Clip</div>
<svg style="left:201px;top:589.25px" width="8" height="5" viewBox="0 0 8 5"><path d="M0.5 0.5l3.5 3.5 3.5-3.5" fill="none" stroke="#a0a0a4" stroke-width="1.1"/></svg>
<div class="t" style="top:602.31px;font-size:10.6px;color:#8a8a8e;right:1455.5px;">Color Science</div>
<div class="a" style="left:86px;top:599.6999999999999px;width:130px;height:15px;background:#1c1c1e;border-radius:2px"></div>
<div class="t" style="top:602.45px;font-size:10.3px;color:#b8b8bc;left:94.5px;">IPP2</div>
<svg style="left:201px;top:605.1999999999999px" width="8" height="5" viewBox="0 0 8 5"><path d="M0.5 0.5l3.5 3.5 3.5-3.5" fill="none" stroke="#a0a0a4" stroke-width="1.1"/></svg>
<div class="t" style="top:618.26px;font-size:10.6px;color:#8a8a8e;right:1455.5px;">Color Space</div>
<div class="a" style="left:86px;top:615.65px;width:130px;height:15px;background:#1c1c1e;border-radius:2px"></div>
<div class="t" style="top:618.40px;font-size:10.3px;color:#b8b8bc;left:94.5px;">REDWideGamutRGB</div>
<svg style="left:201px;top:621.15px" width="8" height="5" viewBox="0 0 8 5"><path d="M0.5 0.5l3.5 3.5 3.5-3.5" fill="none" stroke="#a0a0a4" stroke-width="1.1"/></svg>
<div class="t" style="top:634.21px;font-size:10.6px;color:#8a8a8e;right:1455.5px;">Gamma Curve</div>
<div class="a" style="left:86px;top:631.5999999999999px;width:130px;height:15px;background:#1c1c1e;border-radius:2px"></div>
<div class="t" style="top:634.35px;font-size:10.3px;color:#b8b8bc;left:94.5px;">Log3G10</div>
<svg style="left:201px;top:637.0999999999999px" width="8" height="5" viewBox="0 0 8 5"><path d="M0.5 0.5l3.5 3.5 3.5-3.5" fill="none" stroke="#a0a0a4" stroke-width="1.1"/></svg>
<div class="t" style="top:650.16px;font-size:10.6px;color:#8a8a8e;right:1455.5px;">Blend Type</div>
<div class="a" style="left:86px;top:647.55px;width:130px;height:15px;background:#1c1c1e;border-radius:2px"></div>
<div class="t" style="top:650.30px;font-size:10.3px;color:#b8b8bc;left:94.5px;">None</div>
<svg style="left:201px;top:653.05px" width="8" height="5" viewBox="0 0 8 5"><path d="M0.5 0.5l3.5 3.5 3.5-3.5" fill="none" stroke="#a0a0a4" stroke-width="1.1"/></svg>
<div class="t" style="top:666.21px;font-size:10.6px;color:#8a8a8e;right:1455.5px;">Blend Bias</div>
<div class="a" style="left:86px;top:663.5px;width:44.5px;height:15px;background:#1c1c1e;border-radius:2px"></div>
<div class="t" style="top:666.50px;font-size:9.8px;color:#b8b8bc;left:108.3px;transform:translateX(-50%);">0.00</div>
<div class="a" style="left:86px;top:680.3px;width:11.5px;height:13px;background:#1c1c1e;border-radius:2px"></div>
<svg style="left:87.5px;top:681.8px" width="9" height="10" viewBox="0 0 9 10"><path d="M1 5.5l2.5 3L8 1" fill="none" stroke="#f0f0f2" stroke-width="1.6"/></svg>
<div class="t" style="top:681.61px;font-size:10.6px;color:#8a8a8e;left:105.5px;">Apply Metadata Curves</div>
<div class="a" style="left:86px;top:695.4px;width:11.5px;height:13px;background:#1c1c1e;border-radius:2px"></div>
<div class="t" style="top:696.71px;font-size:10.6px;color:#8a8a8e;left:105.5px;">Apply Creative LUT</div>
<div class="a" style="left:86px;top:711.4px;width:11.5px;height:13px;background:#1c1c1e;border-radius:2px"></div>
<svg style="left:87.5px;top:712.9px" width="9" height="10" viewBox="0 0 9 10"><path d="M1 5.5l2.5 3L8 1" fill="none" stroke="#f0f0f2" stroke-width="1.6"/></svg>
<div class="t" style="top:712.71px;font-size:10.6px;color:#8a8a8e;left:105.5px;">Apply CDL</div>
<div class="t" style="top:570.51px;font-size:10.6px;color:#8a8a8e;right:1229px;">ISO</div>
<div class="a" style="left:311.5px;top:568px;width:80.5px;height:15px;background:#1c1c1e;border-radius:2px"></div>
<div class="t" style="top:570.75px;font-size:10.3px;color:#b8b8bc;left:320.0px;">400</div>
<svg style="left:377.0px;top:573.5px" width="8" height="5" viewBox="0 0 8 5"><path d="M0.5 0.5l3.5 3.5 3.5-3.5" fill="none" stroke="#a0a0a4" stroke-width="1.1"/></svg>
<div class="t" style="top:593.21px;font-size:10.6px;color:#4e4e52;right:1229px;">Outpu...e Map</div>
<div class="a" style="left:311.5px;top:590.5px;width:80.5px;height:15px;background:#252528;border-radius:2px"></div>
<div class="t" style="top:593.25px;font-size:10.3px;color:#505054;left:320.0px;">Medium</div>
<svg style="left:377.0px;top:596.0px" width="8" height="5" viewBox="0 0 8 5"><path d="M0.5 0.5l3.5 3.5 3.5-3.5" fill="none" stroke="#4a4a4e" stroke-width="1.1"/></svg>
<div class="t" style="top:614.11px;font-size:10.6px;color:#4e4e52;right:1229px;">Highlig...oll Off</div>
<div class="a" style="left:311.5px;top:611.5px;width:80.5px;height:15px;background:#252528;border-radius:2px"></div>
<div class="t" style="top:614.25px;font-size:10.3px;color:#505054;left:320.0px;">Very Soft</div>
<svg style="left:377.0px;top:617.0px" width="8" height="5" viewBox="0 0 8 5"><path d="M0.5 0.5l3.5 3.5 3.5-3.5" fill="none" stroke="#4a4a4e" stroke-width="1.1"/></svg>
<div class="t" style="top:634.61px;font-size:10.6px;color:#4e4e52;right:1229px;">HDR Peak Nits</div>
<div class="a" style="left:311.5px;top:632px;width:45.5px;height:15.5px;background:#252528;border-radius:2px"></div>
<div class="t" style="top:635.00px;font-size:9.8px;color:#4a4a4e;left:321px;">10000</div>
<div class="a" style="left:311.5px;top:654.5px;width:11.5px;height:13px;background:#1c1c1e;border-radius:2px"></div>
<svg style="left:313.0px;top:656px" width="9" height="10" viewBox="0 0 9 10"><path d="M1 5.5l2.5 3L8 1" fill="none" stroke="#f0f0f2" stroke-width="1.6"/></svg>
<div class="t" style="top:655.81px;font-size:10.6px;color:#a8a8ac;left:332px;">Chroma NR</div>
<div class="t" style="top:677.01px;font-size:10.6px;color:#8a8a8e;right:1229px;">Flashi...Adjust</div>
<div class="a" style="left:311.5px;top:674.5px;width:80.5px;height:15px;background:#1c1c1e;border-radius:2px"></div>
<div class="t" style="top:677.25px;font-size:10.3px;color:#b8b8bc;left:320.0px;">None</div>
<svg style="left:377.0px;top:680.0px" width="8" height="5" viewBox="0 0 8 5"><path d="M0.5 0.5l3.5 3.5 3.5-3.5" fill="none" stroke="#a0a0a4" stroke-width="1.1"/></svg>
<div class="t" style="top:570.31px;font-size:10.6px;color:#8a8a8e;right:1049.5px;">Color Temp</div>
<div class="a" style="left:491px;top:567.5px;width:45.5px;height:15.5px;background:#1c1c1e;border-radius:2px"></div>
<div class="t" style="top:570.70px;font-size:9.8px;color:#d0d0d2;left:513.8px;transform:translateX(-50%);">5600</div>
<div class="t" style="top:591.01px;font-size:10.6px;color:#8a8a8e;right:1049.5px;">Tint</div>
<div class="a" style="left:491px;top:588.2px;width:45.5px;height:15.5px;background:#1c1c1e;border-radius:2px"></div>
<div class="t" style="top:591.40px;font-size:9.8px;color:#d0d0d2;left:513.8px;transform:translateX(-50%);">0.00</div>
<div class="t" style="top:613.31px;font-size:10.6px;color:#8a8a8e;right:1049.5px;">Exposure Adjust</div>
<div class="a" style="left:491px;top:610.5px;width:45.5px;height:15.5px;background:#1c1c1e;border-radius:2px"></div>
<div class="t" style="top:613.70px;font-size:9.8px;color:#d0d0d2;left:513.8px;transform:translateX(-50%);">0.00</div>
<div class="t" style="top:548.11px;font-size:10.6px;color:#e4e4e6;font-weight:700;left:584px;">Key</div>
<div class="a" style="left:577px;top:563px;width:324px;height:225px;background:#28282c;"></div>
<div class="a" style="left:899px;top:563px;width:1px;height:224px;background:#1a1a1c;"></div>
<div class="a" style="left:581px;top:568px;width:314px;height:215px;background:#000;"></div>
<div class="a" style="left:581px;top:609px;width:314px;height:133px;background:#fff;"></div>
<div class="t" style="top:548.20px;font-size:10.4px;color:#e4e4e6;font-weight:700;right:421px;">Node Key</div>
<div class="a" style="left:1122px;top:543px;width:1px;height:20px;background:#141416;"></div>
<svg style="left:1131px;top:547px" width="12" height="12" viewBox="0 0 12 12"><path d="M2.5 3.5A4.5 4.5 0 1 1 1.5 6.5" fill="none" stroke="#8a8a8e" stroke-width="1.1"/><path d="M1 1v3.5h3.5" fill="none" stroke="#8a8a8e" stroke-width="1.1"/><path d="M6 4v2.5l1.5 1" fill="none" stroke="#8a8a8e"/></svg>
<div class="a" style="left:901px;top:563px;width:250px;height:225px;background:#2a2a2e;"></div>
<div class="t" style="top:568.91px;font-size:10.8px;color:#dcdcde;left:917px;">Key Input</div>
<svg style="left:1095px;top:567px" width="14" height="14"><rect x="0" y="0" width="14" height="14" fill="#f0f0f2"/><circle cx="7" cy="7" r="4" fill="#222"/></svg>
<svg style="left:1120px;top:567px" width="14" height="14"><rect x="0" y="0" width="14" height="14" fill="#2a2a2e" stroke="#6a6a6e" stroke-width="0.8"/><circle cx="7" cy="7" r="6" fill="#f0f0f2"/><path d="M0 3h14M0 11h14" stroke="#aaa" stroke-width="0.7"/></svg>
<div class="t" style="top:592.16px;font-size:10.9px;color:#6e6e72;right:589.5px;">Gain</div>
<div class="a" style="left:955px;top:589.5px;width:35.5px;height:16px;background:#1a1a1c;border-radius:2px"></div>
<div class="t" style="top:592.45px;font-size:10.3px;color:#d8d8da;left:972.8px;transform:translateX(-50%);">1.000</div>
<div class="t" style="top:592.16px;font-size:10.9px;color:#6e6e72;right:456px;">Offset</div>
<div class="a" style="left:1089px;top:589.5px;width:35.5px;height:16px;background:#1a1a1c;border-radius:2px"></div>
<div class="t" style="top:592.45px;font-size:10.3px;color:#d8d8da;left:1106.8px;transform:translateX(-50%);">0.000</div>
<div class="t" style="top:617.86px;font-size:10.9px;color:#6e6e72;right:589.5px;">Blur R.</div>
<div class="a" style="left:955px;top:615.2px;width:35.5px;height:16px;background:#1a1a1c;border-radius:2px"></div>
<div class="t" style="top:618.15px;font-size:10.3px;color:#d8d8da;left:972.8px;transform:translateX(-50%);">0.000</div>
<div class="t" style="top:617.86px;font-size:10.9px;color:#6e6e72;right:456px;">Blur H/V</div>
<div class="a" style="left:1089px;top:615.2px;width:35.5px;height:16px;background:#1a1a1c;border-radius:2px"></div>
<div class="t" style="top:618.15px;font-size:10.3px;color:#d8d8da;left:1106.8px;transform:translateX(-50%);">0.000</div>
<div class="a" style="left:916px;top:647px;width:220px;height:1px;background:#3a3a3e;"></div>
<div class="t" style="top:653.31px;font-size:10.8px;color:#dcdcde;left:917px;">Key Output</div>
<svg style="left:1120px;top:652px" width="14" height="14"><rect x="0.5" y="0.5" width="13" height="13" fill="#2a2a2e" stroke="#505054"/><circle cx="7" cy="7" r="4" fill="#7a7a7e"/></svg>
<div class="t" style="top:677.56px;font-size:10.9px;color:#6e6e72;right:589.5px;">Gain</div>
<div class="a" style="left:955px;top:674.9px;width:35.5px;height:16px;background:#1a1a1c;border-radius:2px"></div>
<div class="t" style="top:677.85px;font-size:10.3px;color:#d8d8da;left:972.8px;transform:translateX(-50%);">1.000</div>
<div class="t" style="top:677.56px;font-size:10.9px;color:#6e6e72;right:456px;">Offset</div>
<div class="a" style="left:1089px;top:674.9px;width:35.5px;height:16px;background:#1a1a1c;border-radius:2px"></div>
<div class="t" style="top:677.85px;font-size:10.3px;color:#d8d8da;left:1106.8px;transform:translateX(-50%);">0.000</div>
<div class="a" style="left:916px;top:706.5px;width:220px;height:1px;background:#3a3a3e;"></div>
<div class="t" style="top:712.71px;font-size:10.8px;color:#dcdcde;left:917px;">Qualifier</div>
<svg style="left:1095px;top:711px" width="14" height="14"><rect x="0.5" y="0.5" width="13" height="13" fill="#2a2a2e" stroke="#505054"/><circle cx="7" cy="7" r="4" fill="#7a7a7e"/></svg>
<svg style="left:1120px;top:711px" width="14" height="14"><rect x="0" y="0" width="14" height="14" fill="#2a2a2e" stroke="#6a6a6e" stroke-width="0.8"/><circle cx="7" cy="7" r="6" fill="#f0f0f2"/><path d="M0 3h14M0 11h14" stroke="#aaa" stroke-width="0.7"/></svg>
<div class="t" style="top:736.86px;font-size:10.9px;color:#6e6e72;right:589.5px;">Gain</div>
<div class="a" style="left:955px;top:734.2px;width:35.5px;height:16px;background:#1a1a1c;border-radius:2px"></div>
<div class="t" style="top:737.15px;font-size:10.3px;color:#d8d8da;left:972.8px;transform:translateX(-50%);">1.000</div>
<div class="t" style="top:736.86px;font-size:10.9px;color:#6e6e72;right:456px;">Offset</div>
<div class="a" style="left:1089px;top:734.2px;width:35.5px;height:16px;background:#1a1a1c;border-radius:2px"></div>
<div class="t" style="top:737.15px;font-size:10.3px;color:#d8d8da;left:1106.8px;transform:translateX(-50%);">0.000</div>
<div class="t" style="top:548.20px;font-size:10.4px;color:#e4e4e6;font-weight:700;left:1160px;">Scopes</div>
<div class="t" style="top:548.20px;font-size:10.4px;color:#e4e4e6;right:107.5px;">Vectorscope</div>
<svg style="left:1436px;top:551px" width="8" height="5" viewBox="0 0 8 5"><path d="M0.5 0.5l3.5 3.5 3.5-3.5" fill="none" stroke="#a0a0a4" stroke-width="1.1"/></svg>
<div class="a" style="left:1448px;top:543px;width:1px;height:20px;background:#141416;"></div>
<div class="a" style="left:1478px;top:543px;width:1px;height:20px;background:#141416;"></div>
<div class="a" style="left:1506px;top:543px;width:1px;height:20px;background:#141416;"></div>
<svg style="left:1455px;top:547px" width="13" height="12" viewBox="0 0 13 12"><path d="M0 2.5h13M0 6h13M0 9.5h13" stroke="#8a8a8e" stroke-width="1"/><circle cx="8" cy="2.5" r="1.8" fill="#1e1e22" stroke="#8a8a8e"/><circle cx="4" cy="6" r="1.8" fill="#1e1e22" stroke="#8a8a8e"/><circle cx="9" cy="9.5" r="1.8" fill="#1e1e22" stroke="#8a8a8e"/></svg>
<svg style="left:1486px;top:548px" width="11" height="11" viewBox="0 0 11 11"><path d="M1 4V1h3M1 1l3 3M10 4V1H7M10 1L7 4M1 7v3h3M1 10l3-3M10 7v3H7M10 10L7 7" fill="none" stroke="#8c8c90" stroke-width="1"/></svg>
<svg style="left:1514px;top:551px" width="15" height="4" viewBox="0 0 15 4"><circle cx="1.8" cy="2" r="1.6" fill="#a8a8ac"/><circle cx="7.5" cy="2" r="1.6" fill="#a8a8ac"/><circle cx="13.2" cy="2" r="1.6" fill="#a8a8ac"/></svg>
<div class="a" style="left:1152px;top:563px;width:384px;height:225px;background:#050505;"></div>
<svg style="left:1152px;top:563px;overflow:hidden" width="384" height="224" viewBox="0 0 384 224"><ellipse cx="191.79999999999995" cy="112.29999999999995" rx="106" ry="103" fill="none" stroke="#74684c" stroke-width="1"/><path d="M85.79999999999995 112.29999999999995H297.79999999999995M191.79999999999995 9.299999999999955V215.29999999999995" stroke="#74684c" stroke-width="0.9"/><path d="M297.8 112.3L286.8 112.3" stroke="#74684c" stroke-width="0.9"/><path d="M297.4 121.3L291.4 120.8" stroke="#74684c" stroke-width="0.9"/><path d="M296.2 130.2L285.4 128.3" stroke="#74684c" stroke-width="0.9"/><path d="M294.2 139.0L288.4 137.4" stroke="#74684c" stroke-width="0.9"/><path d="M291.4 147.5L281.1 143.9" stroke="#74684c" stroke-width="0.9"/><path d="M287.9 155.8L282.4 153.4" stroke="#74684c" stroke-width="0.9"/><path d="M283.6 163.8L274.1 158.5" stroke="#74684c" stroke-width="0.9"/><path d="M278.6 171.4L273.7 168.0" stroke="#74684c" stroke-width="0.9"/><path d="M273.0 178.5L264.6 171.6" stroke="#74684c" stroke-width="0.9"/><path d="M266.8 185.1L262.5 181.0" stroke="#74684c" stroke-width="0.9"/><path d="M259.9 191.2L252.9 183.0" stroke="#74684c" stroke-width="0.9"/><path d="M252.6 196.7L249.2 191.9" stroke="#74684c" stroke-width="0.9"/><path d="M244.8 201.5L239.3 192.2" stroke="#74684c" stroke-width="0.9"/><path d="M236.6 205.6L234.1 200.4" stroke="#74684c" stroke-width="0.9"/><path d="M228.1 209.1L224.3 199.0" stroke="#74684c" stroke-width="0.9"/><path d="M219.2 211.8L217.7 206.2" stroke="#74684c" stroke-width="0.9"/><path d="M210.2 213.7L208.3 203.2" stroke="#74684c" stroke-width="0.9"/><path d="M201.0 214.9L200.5 209.1" stroke="#74684c" stroke-width="0.9"/><path d="M191.8 215.3L191.8 204.6" stroke="#74684c" stroke-width="0.9"/><path d="M182.6 214.9L183.1 209.1" stroke="#74684c" stroke-width="0.9"/><path d="M173.4 213.7L175.3 203.2" stroke="#74684c" stroke-width="0.9"/><path d="M164.4 211.8L165.9 206.2" stroke="#74684c" stroke-width="0.9"/><path d="M155.5 209.1L159.3 199.0" stroke="#74684c" stroke-width="0.9"/><path d="M147.0 205.6L149.5 200.4" stroke="#74684c" stroke-width="0.9"/><path d="M138.8 201.5L144.3 192.2" stroke="#74684c" stroke-width="0.9"/><path d="M131.0 196.7L134.4 191.9" stroke="#74684c" stroke-width="0.9"/><path d="M123.7 191.2L130.7 183.0" stroke="#74684c" stroke-width="0.9"/><path d="M116.8 185.1L121.1 181.0" stroke="#74684c" stroke-width="0.9"/><path d="M110.6 178.5L119.0 171.6" stroke="#74684c" stroke-width="0.9"/><path d="M105.0 171.4L109.9 168.0" stroke="#74684c" stroke-width="0.9"/><path d="M100.0 163.8L109.5 158.5" stroke="#74684c" stroke-width="0.9"/><path d="M95.7 155.8L101.2 153.4" stroke="#74684c" stroke-width="0.9"/><path d="M92.2 147.5L102.5 143.9" stroke="#74684c" stroke-width="0.9"/><path d="M89.4 139.0L95.2 137.4" stroke="#74684c" stroke-width="0.9"/><path d="M87.4 130.2L98.2 128.3" stroke="#74684c" stroke-width="0.9"/><path d="M86.2 121.3L92.2 120.8" stroke="#74684c" stroke-width="0.9"/><path d="M85.8 112.3L96.8 112.3" stroke="#74684c" stroke-width="0.9"/><path d="M86.2 103.3L92.2 103.8" stroke="#74684c" stroke-width="0.9"/><path d="M87.4 94.4L98.2 96.3" stroke="#74684c" stroke-width="0.9"/><path d="M89.4 85.6L95.2 87.2" stroke="#74684c" stroke-width="0.9"/><path d="M92.2 77.1L102.5 80.7" stroke="#74684c" stroke-width="0.9"/><path d="M95.7 68.8L101.2 71.2" stroke="#74684c" stroke-width="0.9"/><path d="M100.0 60.8L109.5 66.1" stroke="#74684c" stroke-width="0.9"/><path d="M105.0 53.2L109.9 56.6" stroke="#74684c" stroke-width="0.9"/><path d="M110.6 46.1L119.0 53.0" stroke="#74684c" stroke-width="0.9"/><path d="M116.8 39.5L121.1 43.6" stroke="#74684c" stroke-width="0.9"/><path d="M123.7 33.4L130.7 41.6" stroke="#74684c" stroke-width="0.9"/><path d="M131.0 27.9L134.4 32.7" stroke="#74684c" stroke-width="0.9"/><path d="M138.8 23.1L144.3 32.4" stroke="#74684c" stroke-width="0.9"/><path d="M147.0 19.0L149.5 24.2" stroke="#74684c" stroke-width="0.9"/><path d="M155.5 15.5L159.3 25.6" stroke="#74684c" stroke-width="0.9"/><path d="M164.4 12.8L165.9 18.4" stroke="#74684c" stroke-width="0.9"/><path d="M173.4 10.9L175.3 21.4" stroke="#74684c" stroke-width="0.9"/><path d="M182.6 9.7L183.1 15.5" stroke="#74684c" stroke-width="0.9"/><path d="M191.8 9.3L191.8 20.0" stroke="#74684c" stroke-width="0.9"/><path d="M201.0 9.7L200.5 15.5" stroke="#74684c" stroke-width="0.9"/><path d="M210.2 10.9L208.3 21.4" stroke="#74684c" stroke-width="0.9"/><path d="M219.2 12.8L217.7 18.4" stroke="#74684c" stroke-width="0.9"/><path d="M228.1 15.5L224.3 25.6" stroke="#74684c" stroke-width="0.9"/><path d="M236.6 19.0L234.1 24.2" stroke="#74684c" stroke-width="0.9"/><path d="M244.8 23.1L239.3 32.4" stroke="#74684c" stroke-width="0.9"/><path d="M252.6 27.9L249.2 32.7" stroke="#74684c" stroke-width="0.9"/><path d="M259.9 33.4L252.9 41.6" stroke="#74684c" stroke-width="0.9"/><path d="M266.8 39.5L262.5 43.6" stroke="#74684c" stroke-width="0.9"/><path d="M273.0 46.1L264.6 53.0" stroke="#74684c" stroke-width="0.9"/><path d="M278.6 53.2L273.7 56.6" stroke="#74684c" stroke-width="0.9"/><path d="M283.6 60.8L274.1 66.1" stroke="#74684c" stroke-width="0.9"/><path d="M287.9 68.8L282.4 71.2" stroke="#74684c" stroke-width="0.9"/><path d="M291.4 77.1L281.1 80.7" stroke="#74684c" stroke-width="0.9"/><path d="M294.2 85.6L288.4 87.2" stroke="#74684c" stroke-width="0.9"/><path d="M296.2 94.4L285.4 96.3" stroke="#74684c" stroke-width="0.9"/><path d="M297.4 103.3L291.4 103.8" stroke="#74684c" stroke-width="0.9"/><path d="M167 43V39H171" fill="none" stroke="#8e7e5a" stroke-width="1.2"/><path d="M186 43V39H182" fill="none" stroke="#8e7e5a" stroke-width="1.2"/><path d="M167 53V57H171" fill="none" stroke="#8e7e5a" stroke-width="1.2"/><path d="M186 53V57H182" fill="none" stroke="#8e7e5a" stroke-width="1.2"/><path d="M182 57h7" stroke="#8e7e5a" stroke-width="1.1"/><text x="188" y="61" font-family="Liberation Sans" font-size="8" fill="#8e7e5a">R</text><path d="M234 49V45H238" fill="none" stroke="#8e7e5a" stroke-width="1.2"/><path d="M253 49V45H249" fill="none" stroke="#8e7e5a" stroke-width="1.2"/><path d="M234 59V63H238" fill="none" stroke="#8e7e5a" stroke-width="1.2"/><path d="M253 59V63H249" fill="none" stroke="#8e7e5a" stroke-width="1.2"/><path d="M249 63h7" stroke="#8e7e5a" stroke-width="1.1"/><text x="255" y="67" font-family="Liberation Sans" font-size="8" fill="#8e7e5a">M</text><path d="M116 101.5V97.5H120" fill="none" stroke="#8e7e5a" stroke-width="1.2"/><path d="M135 101.5V97.5H131" fill="none" stroke="#8e7e5a" stroke-width="1.2"/><path d="M116 111.5V115.5H120" fill="none" stroke="#8e7e5a" stroke-width="1.2"/><path d="M135 111.5V115.5H131" fill="none" stroke="#8e7e5a" stroke-width="1.2"/><path d="M131 115.5h7" stroke="#8e7e5a" stroke-width="1.1"/><text x="137" y="119.5" font-family="Liberation Sans" font-size="8" fill="#8e7e5a">Y</text><path d="M249 113.60000000000002V109.60000000000002H253" fill="none" stroke="#8e7e5a" stroke-width="1.2"/><path d="M268 113.60000000000002V109.60000000000002H264" fill="none" stroke="#8e7e5a" stroke-width="1.2"/><path d="M249 123.60000000000002V127.60000000000002H253" fill="none" stroke="#8e7e5a" stroke-width="1.2"/><path d="M268 123.60000000000002V127.60000000000002H264" fill="none" stroke="#8e7e5a" stroke-width="1.2"/><path d="M264 127.60000000000002h7" stroke="#8e7e5a" stroke-width="1.1"/><text x="270" y="131.60000000000002" font-family="Liberation Sans" font-size="8" fill="#8e7e5a">B</text><path d="M131 165.70000000000005V161.70000000000005H135" fill="none" stroke="#8e7e5a" stroke-width="1.2"/><path d="M150 165.70000000000005V161.70000000000005H146" fill="none" stroke="#8e7e5a" stroke-width="1.2"/><path d="M131 175.70000000000005V179.70000000000005H135" fill="none" stroke="#8e7e5a" stroke-width="1.2"/><path d="M150 175.70000000000005V179.70000000000005H146" fill="none" stroke="#8e7e5a" stroke-width="1.2"/><path d="M146 179.70000000000005h7" stroke="#8e7e5a" stroke-width="1.1"/><text x="152" y="183.70000000000005" font-family="Liberation Sans" font-size="8" fill="#8e7e5a">G</text><path d="M198 171.70000000000005V167.70000000000005H202" fill="none" stroke="#8e7e5a" stroke-width="1.2"/><path d="M217 171.70000000000005V167.70000000000005H213" fill="none" stroke="#8e7e5a" stroke-width="1.2"/><path d="M198 181.70000000000005V185.70000000000005H202" fill="none" stroke="#8e7e5a" stroke-width="1.2"/><path d="M217 181.70000000000005V185.70000000000005H213" fill="none" stroke="#8e7e5a" stroke-width="1.2"/><path d="M213 185.70000000000005h7" stroke="#8e7e5a" stroke-width="1.1"/><text x="219" y="189.70000000000005" font-family="Liberation Sans" font-size="8" fill="#8e7e5a">C</text><defs><radialGradient id="glow" cx="0.5" cy="0.5" r="0.5"><stop offset="0" stop-color="#fff8e0" stop-opacity="1"/><stop offset="0.4" stop-color="#c8b890" stop-opacity=".6"/><stop offset="1" stop-color="#806a40" stop-opacity="0"/></radialGradient></defs><path d="M132.70000000000005 27L191.79999999999995 112.29999999999995" stroke="#e8e8e8" stroke-width="1.2"/><ellipse cx="181.79999999999995" cy="103.29999999999995" rx="18" ry="6" transform="rotate(40 181.79999999999995 103.29999999999995)" fill="url(#glow)"/><path d="M185.79999999999995 117.29999999999995C191.79999999999995 112.29999999999995 193.79999999999995 116.29999999999995 194.79999999999995 124.29999999999995S196.79999999999995 134.29999999999995 198.79999999999995 137.29999999999995" fill="none" stroke="#a8e8f0" stroke-width="2.4" opacity=".85"/><circle cx="191.79999999999995" cy="112.29999999999995" r="3" fill="#fffef0"/></svg>
<div class="a" style="left:0px;top:788px;width:1536px;height:38px;background:#1c1c1f;"></div>
<div class="a" style="left:816.5px;top:788px;width:95px;height:38px;background:#050506;"></div>
<div class="a" style="left:816.5px;top:825px;width:95px;height:1px;background:#b03434;"></div>
<svg style="left:36px;top:800px" width="15" height="15" viewBox="0 0 15 15"><circle cx="7.5" cy="4" r="3" fill="#e0e0e2"/><circle cx="3.5" cy="10.5" r="3" fill="#e0e0e2"/><circle cx="11.5" cy="10.5" r="3" fill="#e0e0e2"/></svg>
<div class="t" style="top:803.31px;font-size:10.6px;color:#d8d8da;left:58.5px;">DaVinci Resolve 17</div>
<div class="t" style="top:811.90px;font-size:10.4px;color:#8e8e92;left:480px;transform:translateX(-50%);">Media</div>
<div class="t" style="top:811.90px;font-size:10.4px;color:#8e8e92;left:576px;transform:translateX(-50%);">Cut</div>
<div class="t" style="top:811.90px;font-size:10.4px;color:#8e8e92;left:672px;transform:translateX(-50%);">Edit</div>
<div class="t" style="top:811.90px;font-size:10.4px;color:#8e8e92;left:768px;transform:translateX(-50%);">Fusion</div>
<div class="t" style="top:811.90px;font-size:10.4px;color:#f0f0f2;font-weight:700;left:864px;transform:translateX(-50%);">Color</div>
<div class="t" style="top:811.90px;font-size:10.4px;color:#8e8e92;left:960px;transform:translateX(-50%);">Fairlight</div>
<div class="t" style="top:811.90px;font-size:10.4px;color:#8e8e92;left:1056px;transform:translateX(-50%);">Deliver</div>
<svg style="left:472px;top:795px" width="17" height="13" viewBox="0 0 17 13"><rect x="0.5" y="2.5" width="16" height="10" fill="none" stroke="#8a8a8e"/><path d="M2 1h13" stroke="#8a8a8e" stroke-width="0.8"/><path d="M2 11l4-4 3 2 3-2 4 4z" fill="#8a8a8e" opacity=".7"/><circle cx="5" cy="6" r="1" fill="#8a8a8e"/></svg>
<svg style="left:567px;top:794px" width="19" height="13" viewBox="0 0 19 13"><path d="M4 1h14l-3 11H1z" fill="none" stroke="#8a8a8e"/><path d="M8 1L5 12M12 1L9 12" stroke="#8a8a8e"/></svg>
<svg style="left:663px;top:795px" width="19" height="13" viewBox="0 0 19 13"><path d="M1 3h17M1 7h17M1 11h17" stroke="#8a8a8e" stroke-width="1.2"/><rect x="6" y="1" width="6" height="11" fill="none" stroke="#8a8a8e"/></svg>
<svg style="left:760px;top:793px" width="16" height="14" viewBox="0 0 16 14"><path d="M2 13L12 2M10 1l4 1-1 4M1 8l2 1M5 5h2" fill="none" stroke="#8a8a8e" stroke-width="1.3"/></svg>
<svg style="left:856px;top:794px" width="14" height="14" viewBox="0 0 14 14"><circle cx="12.00" cy="7.00" r="1.3" fill="#e04a4a"/><circle cx="10.54" cy="10.54" r="1.3" fill="#e0a030"/><circle cx="7.00" cy="12.00" r="1.3" fill="#d0d040"/><circle cx="3.46" cy="10.54" r="1.3" fill="#40c060"/><circle cx="2.00" cy="7.00" r="1.3" fill="#40b0e0"/><circle cx="3.46" cy="3.46" r="1.3" fill="#4060e0"/><circle cx="7.00" cy="2.00" r="1.3" fill="#a050e0"/><circle cx="10.53" cy="3.46" r="1.3" fill="#e050b0"/></svg>
<svg style="left:953px;top:794px" width="14" height="14" viewBox="0 0 14 14"><path d="M4 11V2l8-1.5V9" fill="none" stroke="#8a8a8e" stroke-width="1.2"/><circle cx="2.6" cy="11" r="2" fill="#8a8a8e"/><circle cx="10.6" cy="9.5" r="2" fill="#8a8a8e"/></svg>
<svg style="left:1048px;top:793px" width="16" height="15" viewBox="0 0 16 15"><path d="M14 1c-5 0-9 4-10 9l2 2c5-1 9-5 9-10z" fill="none" stroke="#8a8a8e" stroke-width="1.2"/><path d="M4 10l-2 4 4-2M3 7H1l2-3h3M8 12v2l3-2v-3" fill="none" stroke="#8a8a8e"/><circle cx="10" cy="5" r="1.3" fill="#8a8a8e"/></svg>
<svg style="left:1464px;top:801px" width="11" height="11" viewBox="0 0 11 11"><path d="M5.5 0L0 5h1.5v5.5h3v-3h2v3h3V5H11z" fill="#d0d0d2"/></svg>
<svg style="left:1501px;top:800px" width="14" height="14" viewBox="0 0 14 14"><rect x="6" y="0" width="2" height="14" fill="#d0d0d2" transform="rotate(0 7 7)"/><rect x="6" y="0" width="2" height="14" fill="#d0d0d2" transform="rotate(45 7 7)"/><rect x="6" y="0" width="2" height="14" fill="#d0d0d2" transform="rotate(90 7 7)"/><rect x="6" y="0" width="2" height="14" fill="#d0d0d2" transform="rotate(135 7 7)"/><circle cx="7" cy="7" r="4.5" fill="#d0d0d2"/><circle cx="7" cy="7" r="2" fill="#1c1c1f"/></svg>
</body></html>
